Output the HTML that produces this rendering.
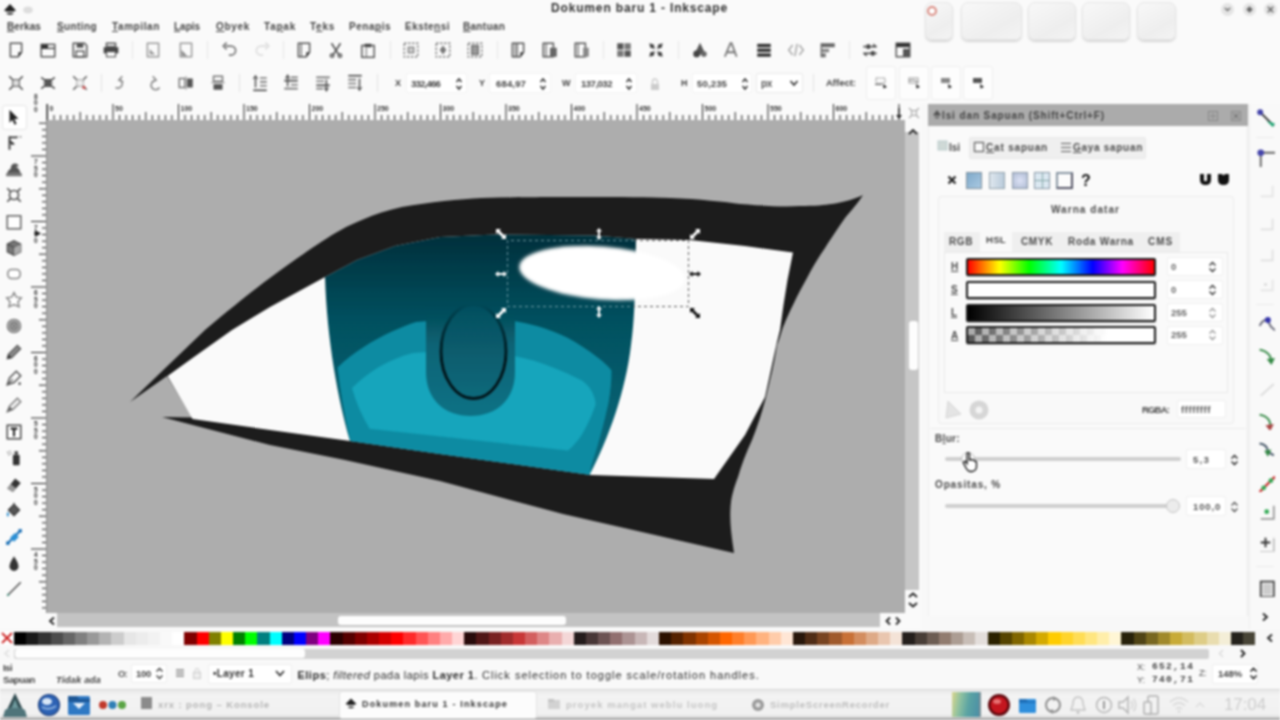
<!DOCTYPE html>
<html lang="id">
<head>
<meta charset="utf-8">
<title>Dokumen baru 1 - Inkscape</title>
<style>
*{box-sizing:border-box;margin:0;padding:0}
html,body{width:1280px;height:720px;overflow:hidden;background:#fafafa}
body{position:relative;font-family:"Liberation Sans",sans-serif;font-size:10px;color:#3a3a3a}
.abs{position:absolute}
#ui{position:absolute;left:0;top:0;width:1280px;height:720px;filter:blur(.8px)}
.t{position:absolute;white-space:nowrap;line-height:12px}
/* SECTION-CSS */
</style>
</head>
<body>
<div id="ui">
<!-- SECTION-TITLE -->
<div class="abs" style="left:0px;top:0px;width:1280px;height:104px;background:#fafafa"></div>
<svg class="abs" style="left:3px;top:3px;" width="14" height="14" viewBox="0 0 14 14"><path d="M7,1 L13,7.5 Q10,9 7,8.600 Q4,9 1,7.500 Z" fill="#222"/><path d="M3,10.500 Q7,9 11,10.500 Q7,13 3,10.500Z" fill="#222"/></svg>
<svg class="abs" style="left:22px;top:5px;" width="12" height="10" viewBox="0 0 12 10"><ellipse cx="6" cy="5" rx="5" ry="3.500" fill="#ddd"/></svg>
<div class="t" style="left:551px;top:1.3px;font-size:12px;line-height:14.4px;color:#2e2e2e;font-weight:bold;letter-spacing:0.84px;">Dokumen baru 1 - Inkscape</div>
<div class="abs" style="left:925px;top:2px;width:28px;height:38px;border-radius:7px;background:linear-gradient(150deg,#f8f8f8,#eeeeee 65%,#f4f4f4);border:1px solid #e6e6e6;box-shadow:0 2px 2px rgba(0,0,0,.14)"></div>
<div class="abs" style="left:961px;top:2px;width:61px;height:38px;border-radius:7px;background:linear-gradient(150deg,#f8f8f8,#eeeeee 65%,#f4f4f4);border:1px solid #e6e6e6;box-shadow:0 2px 2px rgba(0,0,0,.14)"></div>
<div class="abs" style="left:1028px;top:2px;width:48px;height:38px;border-radius:7px;background:linear-gradient(150deg,#f8f8f8,#eeeeee 65%,#f4f4f4);border:1px solid #e6e6e6;box-shadow:0 2px 2px rgba(0,0,0,.14)"></div>
<div class="abs" style="left:1082px;top:2px;width:48px;height:38px;border-radius:7px;background:linear-gradient(150deg,#f8f8f8,#eeeeee 65%,#f4f4f4);border:1px solid #e6e6e6;box-shadow:0 2px 2px rgba(0,0,0,.14)"></div>
<div class="abs" style="left:1137px;top:2px;width:39px;height:38px;border-radius:7px;background:linear-gradient(150deg,#f8f8f8,#eeeeee 65%,#f4f4f4);border:1px solid #e6e6e6;box-shadow:0 2px 2px rgba(0,0,0,.14)"></div>
<div class="abs" style="left:927px;top:6px;width:10px;height:10px;border-radius:50%;border:2px solid #d98a80;background:#fff"></div>
<svg class="abs" style="left:1220.5px;top:3px;" width="13" height="13" viewBox="0 0 12 12"><circle cx="6" cy="6" r="6" fill="#e4e4e4"/><path d="M3.500,4.500 L6,7 L8.500,4.500" stroke="#666" stroke-width="1.300" fill="none"/></svg>
<svg class="abs" style="left:1242.5px;top:3px;" width="13" height="13" viewBox="0 0 12 12"><circle cx="6" cy="6" r="6" fill="#e4e4e4"/><path d="M6,3 L9,6 L6,9 L3,6Z" fill="#666"/></svg>
<svg class="abs" style="left:1263.5px;top:3px;" width="13" height="13" viewBox="0 0 12 12"><circle cx="6" cy="6" r="6" fill="#e4e4e4"/><path d="M3.500,3.500 L8.500,8.500 M8.500,3.500 L3.500,8.500" stroke="#666" stroke-width="1.400"/></svg>
<!-- /SECTION-TITLE -->
<!-- SECTION-MENU -->
<div class="t" style="left:7px;top:20.5px;font-size:10px;font-weight:bold;line-height:12px;color:#444;letter-spacing:0.11px"><u>B</u>erkas</div>
<div class="t" style="left:57px;top:20.5px;font-size:10px;font-weight:bold;line-height:12px;color:#444;letter-spacing:0.40px"><u>S</u>unting</div>
<div class="t" style="left:112px;top:20.5px;font-size:10px;font-weight:bold;line-height:12px;color:#444;letter-spacing:0.60px"><u>T</u>ampilan</div>
<div class="t" style="left:174px;top:20.5px;font-size:10px;font-weight:bold;line-height:12px;color:#444;letter-spacing:-0.03px"><u>L</u>apis</div>
<div class="t" style="left:216px;top:20.5px;font-size:10px;font-weight:bold;line-height:12px;color:#444;letter-spacing:0.68px"><u>O</u>byek</div>
<div class="t" style="left:264px;top:20.5px;font-size:10px;font-weight:bold;line-height:12px;color:#444;letter-spacing:0.77px">Ta<u>p</u>ak</div>
<div class="t" style="left:310px;top:20.5px;font-size:10px;font-weight:bold;line-height:12px;color:#444;letter-spacing:0.73px">T<u>e</u>ks</div>
<div class="t" style="left:349px;top:20.5px;font-size:10px;font-weight:bold;line-height:12px;color:#444;letter-spacing:0.52px">Pena<u>p</u>is</div>
<div class="t" style="left:405px;top:20.5px;font-size:10px;font-weight:bold;line-height:12px;color:#444;letter-spacing:0.48px">Ekste<u>n</u>si</div>
<div class="t" style="left:463px;top:20.5px;font-size:10px;font-weight:bold;line-height:12px;color:#444;letter-spacing:0.29px"><u>B</u>antuan</div>
<!-- /SECTION-MENU -->
<!-- SECTION-TOOLBAR1 -->
<svg class="abs" style="left:7px;top:40.5px;opacity:1;" width="18" height="18" viewBox="0 0 16 16"><path d="M3,2 H13 V10 L10,14 H3Z" stroke="#555" fill="none" stroke-width="1.3"/><path d="M13,10 L10,14 V10Z" fill="#333"/></svg>
<svg class="abs" style="left:39px;top:40.5px;opacity:1;" width="18" height="18" viewBox="0 0 16 16"><rect x="2" y="3" width="12" height="11" stroke="#555" fill="none" stroke-width="1.3"/><path d="M2,3 H8 V6 H14 V7 H2Z" fill="#333"/></svg>
<svg class="abs" style="left:71px;top:40.5px;opacity:1;" width="18" height="18" viewBox="0 0 16 16"><path d="M2,2 H12 L14,4 V14 H2Z" stroke="#555" fill="none" stroke-width="1.3"/><rect x="5" y="2" width="6" height="4" fill="#555"/><rect x="4.500" y="9" width="7" height="5" stroke="#555" fill="none" stroke-width="1.3"/></svg>
<svg class="abs" style="left:102px;top:40.5px;opacity:1;" width="18" height="18" viewBox="0 0 16 16"><rect x="4" y="2" width="8" height="3" stroke="#555" fill="none" stroke-width="1.3"/><rect x="1.500" y="5.500" width="13" height="5.500" fill="#444"/><rect x="4" y="9.500" width="8" height="4.500" fill="#fff" stroke="#555"/></svg>
<svg class="abs" style="left:144px;top:40.5px;opacity:1;" width="18" height="18" viewBox="0 0 16 16"><rect x="3" y="2" width="10" height="12" stroke="#999" fill="none" stroke-width="1.300"/><path d="M5,12 L10,12 L5,7Z" fill="#999"/></svg>
<svg class="abs" style="left:177px;top:40.5px;opacity:1;" width="18" height="18" viewBox="0 0 16 16"><rect x="3" y="2" width="10" height="12" stroke="#999" fill="none" stroke-width="1.300"/><path d="M4,13 L9,13 L4,8Z" fill="#888"/></svg>
<svg class="abs" style="left:221px;top:40.5px;opacity:1;" width="18" height="18" viewBox="0 0 16 16"><path d="M4,4.500 H9 A4,4 0 0 1 9,12.500 H7" stroke="#777" fill="none" stroke-width="1.500"/><path d="M5,1.500 L2,4.500 L5,7.500" stroke="#777" fill="none" stroke-width="1.500"/></svg>
<svg class="abs" style="left:253px;top:40.5px;opacity:1;" width="18" height="18" viewBox="0 0 16 16"><path d="M12,4.500 H7 A4,4 0 0 0 7,12.500 H9" stroke="#ddd" fill="none" stroke-width="1.500"/><path d="M11,1.500 L14,4.500 L11,7.500" stroke="#ddd" fill="none" stroke-width="1.500"/></svg>
<svg class="abs" style="left:295px;top:40.5px;opacity:1;" width="18" height="18" viewBox="0 0 16 16"><path d="M3,2 H13 V10 L10,14 H3Z" stroke="#555" fill="none" stroke-width="1.3"/><path d="M5.500,2 V14" stroke="#555"/><path d="M13,10 L10,14 V10Z" fill="#333"/></svg>
<svg class="abs" style="left:327px;top:40.5px;opacity:1;" width="18" height="18" viewBox="0 0 16 16"><path d="M4,2 L11,13 M12,2 L5,13" stroke="#555" stroke-width="1.500"/><circle cx="4.500" cy="13" r="1.500" stroke="#555" fill="none" stroke-width="1.3"/><circle cx="11.500" cy="13" r="1.500" stroke="#555" fill="none" stroke-width="1.3"/></svg>
<svg class="abs" style="left:359px;top:40.5px;opacity:1;" width="18" height="18" viewBox="0 0 16 16"><rect x="2.500" y="4" width="11" height="10.500" stroke="#555" fill="none" stroke-width="1.3"/><path d="M5,2.500 H11 V5.500 H5Z" fill="#444"/><path d="M6.500,6 V14" stroke="#777"/></svg>
<svg class="abs" style="left:402px;top:40.5px;opacity:1;" width="18" height="18" viewBox="0 0 16 16"><rect x="2" y="2" width="12" height="12" stroke="#777" fill="none" stroke-dasharray="2 1.500" stroke-width="1.300"/><rect x="5.500" y="5.500" width="5" height="5" fill="#ccc" stroke="#777"/></svg>
<svg class="abs" style="left:434px;top:40.5px;opacity:1;" width="18" height="18" viewBox="0 0 16 16"><rect x="2" y="2" width="12" height="12" stroke="#777" fill="none" stroke-dasharray="2 1.500" stroke-width="1.300"/><path d="M8,4 L11,8 L8,12 L5,8Z" fill="#777"/></svg>
<svg class="abs" style="left:466px;top:40.5px;opacity:1;" width="18" height="18" viewBox="0 0 16 16"><rect x="2" y="2" width="12" height="12" stroke="#777" fill="none" stroke-dasharray="2 1.500" stroke-width="1.300"/><rect x="5" y="4" width="6" height="8" fill="#999" stroke="#666"/></svg>
<svg class="abs" style="left:509px;top:40.5px;opacity:1;" width="18" height="18" viewBox="0 0 16 16"><path d="M3,2 H13 V10 L10,14 H3Z" stroke="#555" fill="none" stroke-width="1.3"/><path d="M5.500,2 V14 M7.500,2V14" stroke="#555"/><path d="M13,10 L10,14 V10Z" fill="#333"/></svg>
<svg class="abs" style="left:541px;top:40.5px;opacity:1;" width="18" height="18" viewBox="0 0 16 16"><rect x="2" y="2" width="9" height="12" stroke="#555" fill="none" stroke-width="1.3"/><path d="M4.500,2V14" stroke="#555"/><rect x="8" y="6" width="6" height="8" fill="#666"/></svg>
<svg class="abs" style="left:573px;top:40.5px;opacity:1;" width="18" height="18" viewBox="0 0 16 16"><rect x="2" y="2" width="9" height="12" stroke="#555" fill="none" stroke-width="1.3"/><path d="M4.500,2V14" stroke="#555"/><rect x="9" y="6" width="5" height="8" fill="#888"/></svg>
<svg class="abs" style="left:615px;top:40.5px;opacity:1;" width="18" height="18" viewBox="0 0 16 16"><rect x="2" y="2" width="5.500" height="5.500" fill="#555"/><rect x="8.500" y="2" width="5.500" height="5.500" fill="#777"/><rect x="2" y="8.500" width="5.500" height="5.500" fill="#777"/><rect x="8.500" y="8.500" width="5.500" height="5.500" fill="#555"/></svg>
<svg class="abs" style="left:647px;top:40.5px;opacity:1;" width="18" height="18" viewBox="0 0 16 16"><path d="M2,2 L6,3 L7,7 L3,6Z M14,2 L10,3 L9,7 L13,6Z M2,14 L6,13 L7,9 L3,10Z M14,14 L10,13 L9,9 L13,10Z" fill="#444"/></svg>
<svg class="abs" style="left:691px;top:40.5px;opacity:1;" width="18" height="18" viewBox="0 0 16 16"><path d="M8,1.500 L13,12 H3Z" fill="#555"/><circle cx="5" cy="11.500" r="3" fill="#444"/><circle cx="11.500" cy="11.500" r="2.500" fill="#666"/></svg>
<svg class="abs" style="left:722px;top:40.5px;opacity:1;" width="18" height="18" viewBox="0 0 16 16"><path d="M2.500,14 L7.500,2 H8.500 L13,14 M4.500,10 H11" stroke="#777" stroke-width="1.600" fill="none"/></svg>
<svg class="abs" style="left:755px;top:40.5px;opacity:1;" width="18" height="18" viewBox="0 0 16 16"><rect x="2" y="2.500" width="12" height="3" fill="#333"/><rect x="2" y="6.700" width="12" height="3" fill="#333"/><rect x="2" y="11" width="12" height="3" fill="#333"/></svg>
<svg class="abs" style="left:787px;top:40.5px;opacity:1;" width="18" height="18" viewBox="0 0 16 16"><path d="M5,3.500 L1.500,8 L5,12.500 M11,3.500 L14.500,8 L11,12.500 M9,2.500 L7,13.500" stroke="#aaa" stroke-width="1.400" fill="none"/></svg>
<svg class="abs" style="left:819px;top:40.5px;opacity:1;" width="18" height="18" viewBox="0 0 16 16"><rect x="2" y="2" width="12" height="3.500" fill="#666"/><rect x="2" y="7" width="7" height="3" fill="#888"/><rect x="2" y="11" width="4" height="3.500" fill="#777"/><path d="M2,2V14.500" stroke="#555"/></svg>
<svg class="abs" style="left:861px;top:40.5px;opacity:1;" width="18" height="18" viewBox="0 0 16 16"><path d="M2,5 H14 M2,11 H14" stroke="#555" stroke-width="1.400"/><path d="M11,2 L14,5 L11,5Z M5,14 L2,11 L5,11Z" fill="#444"/><rect x="5" y="3" width="3" height="4" fill="#444"/><rect x="9" y="9" width="3" height="4" fill="#444"/></svg>
<svg class="abs" style="left:894px;top:40.5px;opacity:1;" width="18" height="18" viewBox="0 0 16 16"><rect x="2" y="2" width="12" height="12" stroke="#555" fill="none" stroke-width="1.3"/><rect x="2" y="2" width="12" height="3.500" fill="#333"/><rect x="8" y="7" width="6" height="7" fill="#555"/></svg>
<div class="abs" style="left:132px;top:41px;width:1px;height:18px;background:#e6e6e6"></div>
<div class="abs" style="left:207px;top:41px;width:1px;height:18px;background:#e6e6e6"></div>
<div class="abs" style="left:283px;top:41px;width:1px;height:18px;background:#e6e6e6"></div>
<div class="abs" style="left:390px;top:41px;width:1px;height:18px;background:#e6e6e6"></div>
<div class="abs" style="left:497px;top:41px;width:1px;height:18px;background:#e6e6e6"></div>
<div class="abs" style="left:603px;top:41px;width:1px;height:18px;background:#e6e6e6"></div>
<div class="abs" style="left:678px;top:41px;width:1px;height:18px;background:#e6e6e6"></div>
<div class="abs" style="left:849px;top:41px;width:1px;height:18px;background:#e6e6e6"></div>
<!-- /SECTION-TOOLBAR1 -->
<!-- SECTION-TOOLBAR2 -->
<svg class="abs" style="left:7px;top:73.5px;opacity:1;" width="18" height="18" viewBox="0 0 16 16"><path d="M2,2 L14,14 M14,2 L2,14" stroke="#555" stroke-width="1.500"/><rect x="5" y="5" width="6" height="6" fill="#ddd" stroke="#666"/></svg>
<svg class="abs" style="left:39px;top:73.5px;opacity:1;" width="18" height="18" viewBox="0 0 16 16"><path d="M2,3 L14,13 M14,3 L2,13" stroke="#555" stroke-width="1.500"/><path d="M4,8 H12 M5,5.500 H11 M5,10.500H11" stroke="#333" stroke-width="1.500"/></svg>
<svg class="abs" style="left:71px;top:73.5px;opacity:1;" width="18" height="18" viewBox="0 0 16 16"><path d="M2,2 L14,14 M14,2 L2,14" stroke="#666" stroke-width="1.500"/><rect x="5" y="5" width="6" height="6" fill="#eee" stroke="#888" stroke-dasharray="1.500 1"/><circle cx="11.500" cy="12" r="1.500" fill="#c55"/></svg>
<svg class="abs" style="left:111px;top:73.5px;opacity:1;" width="18" height="18" viewBox="0 0 16 16"><path d="M4,12 A4,4 0 1 0 8,5" stroke="#888" stroke-width="1.400" fill="none"/><path d="M10,2 L7,5.500 L11,7" stroke="#888" fill="none" stroke-width="1.400"/></svg>
<svg class="abs" style="left:146px;top:73.5px;opacity:1;" width="18" height="18" viewBox="0 0 16 16"><path d="M12,12 A4,4 0 1 1 8,6" stroke="#888" stroke-width="1.400" fill="none"/><path d="M6,2 L9,5.500 L5,7" stroke="#888" fill="none" stroke-width="1.400"/></svg>
<svg class="abs" style="left:177px;top:73.5px;opacity:1;" width="18" height="18" viewBox="0 0 16 16"><path d="M2,4 H7 V12 H2Z" stroke="#777" fill="none" stroke-width="1.300"/><path d="M9,4 H14 V12 H9Z" fill="#555"/><path d="M8,2V14" stroke="#999"/></svg>
<svg class="abs" style="left:209px;top:73.5px;opacity:1;" width="18" height="18" viewBox="0 0 16 16"><path d="M4,2 H12 V6.500 H4Z" stroke="#777" fill="none" stroke-width="1.300"/><path d="M4,9 H12 V14 H4Z" fill="#555"/><path d="M2,7.700H14" stroke="#999"/></svg>
<svg class="abs" style="left:251px;top:73.5px;opacity:1;" width="18" height="18" viewBox="0 0 16 16"><path d="M2,14.500 H14" stroke="#444" stroke-width="1.400"/><path d="M4,2 V12" stroke="#555" stroke-width="1.400"/><path d="M2,4.500 L4,1.500 L6,4.500" stroke="#555" fill="none"/><path d="M8,3.500H14 M8,7H14 M8,10.500H14" stroke="#777" stroke-width="1.400"/></svg>
<svg class="abs" style="left:282px;top:73.5px;opacity:1;" width="18" height="18" viewBox="0 0 16 16"><path d="M2,6 H14" stroke="#444" stroke-width="1.400"/><path d="M5,1.500 V11" stroke="#555" stroke-width="1.400"/><path d="M3,4 L5,1 L7,4" stroke="#555" fill="none"/><path d="M8,3H14 M8,9.500H14 M2,13H14" stroke="#777" stroke-width="1.400"/></svg>
<svg class="abs" style="left:314px;top:73.5px;opacity:1;" width="18" height="18" viewBox="0 0 16 16"><path d="M2,10 H14" stroke="#444" stroke-width="1.400"/><path d="M11,5 V14.500" stroke="#555" stroke-width="1.400"/><path d="M9,12 L11,15 L13,12" stroke="#555" fill="none"/><path d="M2,3H14 M2,6.500H9 M2,13H8" stroke="#777" stroke-width="1.400"/></svg>
<svg class="abs" style="left:346px;top:73.5px;opacity:1;" width="18" height="18" viewBox="0 0 16 16"><path d="M2,1.500 H14" stroke="#444" stroke-width="1.400"/><path d="M12,4 V14" stroke="#555" stroke-width="1.400"/><path d="M10,11.500 L12,14.500 L14,11.500" stroke="#555" fill="none"/><path d="M2,5H9 M2,8.500H9 M2,12H9" stroke="#777" stroke-width="1.400"/></svg>
<div class="abs" style="left:101px;top:74px;width:1px;height:18px;background:#e2e2e2"></div>
<div class="abs" style="left:239px;top:74px;width:1px;height:18px;background:#e2e2e2"></div>
<div class="abs" style="left:377px;top:74px;width:1px;height:18px;background:#e2e2e2"></div>
<div class="t" style="left:395px;top:78.1px;font-size:9px;line-height:10.8px;color:#444;font-weight:bold;">X</div>
<div class="abs" style="left:406px;top:73px;width:61px;height:20px;background:#fff;border:1px solid #f3f3f3;border-radius:2px"></div>
<div class="t" style="left:411px;top:77.8px;font-size:9.5px;line-height:11.4px;color:#444;font-weight:bold;letter-spacing:-0.76px;">332,466</div>
<svg class="abs" style="left:455px;top:76.5px;" width="8" height="14" viewBox="0 0 8 14"><path d="M1.500,5 L4,2 L6.500,5 M1.500,9 L4,12 L6.500,9" stroke="#333" stroke-width="1.500" fill="none"/></svg>
<div class="t" style="left:479px;top:78.1px;font-size:9px;line-height:10.8px;color:#444;font-weight:bold;">Y</div>
<div class="abs" style="left:489px;top:73px;width:62px;height:20px;background:#fff;border:1px solid #f3f3f3;border-radius:2px"></div>
<div class="t" style="left:496px;top:77.8px;font-size:9.5px;line-height:11.4px;color:#444;font-weight:bold;letter-spacing:0.16px;">684,97</div>
<svg class="abs" style="left:539px;top:76.5px;" width="8" height="14" viewBox="0 0 8 14"><path d="M1.500,5 L4,2 L6.500,5 M1.500,9 L4,12 L6.500,9" stroke="#333" stroke-width="1.500" fill="none"/></svg>
<div class="t" style="left:562px;top:78.1px;font-size:9px;line-height:10.8px;color:#444;font-weight:bold;">W</div>
<div class="abs" style="left:575px;top:73px;width:62px;height:20px;background:#fff;border:1px solid #f3f3f3;border-radius:2px"></div>
<div class="t" style="left:581px;top:77.8px;font-size:9.5px;line-height:11.4px;color:#444;font-weight:bold;letter-spacing:-0.48px;">137,032</div>
<svg class="abs" style="left:625px;top:76.5px;" width="8" height="14" viewBox="0 0 8 14"><path d="M1.500,5 L4,2 L6.500,5 M1.500,9 L4,12 L6.500,9" stroke="#333" stroke-width="1.500" fill="none"/></svg>
<svg class="abs" style="left:647px;top:76px;opacity:1;" width="16" height="16" viewBox="0 0 16 16"><rect x="4" y="8" width="8" height="6" fill="#ccc"/><path d="M5.500,8 V5.500 A2.500,2.500 0 0 1 10.500,5.500 V8" stroke="#ccc" fill="none" stroke-width="1.300"/></svg>
<div class="t" style="left:681px;top:78.1px;font-size:9px;line-height:10.8px;color:#444;font-weight:bold;">H</div>
<div class="abs" style="left:692px;top:73px;width:60px;height:20px;background:#fff;border:1px solid #f3f3f3;border-radius:2px"></div>
<div class="t" style="left:697px;top:77.8px;font-size:9.5px;line-height:11.4px;color:#444;font-weight:bold;letter-spacing:0.16px;">50,235</div>
<svg class="abs" style="left:741px;top:76.5px;" width="8" height="14" viewBox="0 0 8 14"><path d="M1.500,5 L4,2 L6.500,5 M1.500,9 L4,12 L6.500,9" stroke="#333" stroke-width="1.500" fill="none"/></svg>
<div class="abs" style="left:756px;top:73px;width:47px;height:20px;background:#fff;border:1px solid #e8e8e8;border-radius:2px"></div>
<div class="t" style="left:761px;top:77.5px;font-size:10px;line-height:12px;color:#555;font-weight:bold;letter-spacing:-0.34px;">px</div>
<svg class="abs" style="left:789px;top:79px;" width="10" height="8" viewBox="0 0 10 8"><path d="M1.500,2 L5,6 L8.500,2" stroke="#333" stroke-width="1.700" fill="none"/></svg>
<div class="abs" style="left:813px;top:74px;width:1px;height:18px;background:#e2e2e2"></div>
<div class="t" style="left:826px;top:77.3px;font-size:9.5px;line-height:11.4px;color:#444;font-weight:bold;letter-spacing:-0.01px;">Affect:</div>
<div class="abs" style="left:866px;top:66px;width:30px;height:34px;background:#fdfdfd;border:1px solid #efefef;border-radius:3px"></div>
<svg class="abs" style="left:873px;top:75px;opacity:1;" width="16" height="16" viewBox="0 0 16 16"><rect x="3" y="3" width="9" height="5" fill="none" stroke="#777" stroke-dasharray="1.500 1"/><path d="M2,9.500H9" stroke="#555"/><path d="M10,9 L14,12 L10.500,13.500Z" fill="#222"/></svg>
<div class="abs" style="left:899px;top:66px;width:30px;height:34px;background:#fdfdfd;border:1px solid #efefef;border-radius:3px"></div>
<svg class="abs" style="left:906px;top:75px;opacity:1;" width="16" height="16" viewBox="0 0 16 16"><rect x="3" y="3" width="9" height="5" fill="none" stroke="#999"/><path d="M3,5.500 Q8,4 12,7" stroke="#777" fill="none"/><path d="M10,9 L14,12 L10.500,13.500Z" fill="#222"/></svg>
<div class="abs" style="left:931px;top:66px;width:30px;height:34px;background:#fdfdfd;border:1px solid #efefef;border-radius:3px"></div>
<svg class="abs" style="left:938px;top:75px;opacity:1;" width="16" height="16" viewBox="0 0 16 16"><rect x="3" y="3" width="9" height="5" fill="#888"/><path d="M10,9 L14,12 L10.500,13.500Z" fill="#222"/></svg>
<div class="abs" style="left:963px;top:66px;width:30px;height:34px;background:#fdfdfd;border:1px solid #efefef;border-radius:3px"></div>
<svg class="abs" style="left:970px;top:75px;opacity:1;" width="16" height="16" viewBox="0 0 16 16"><rect x="3" y="3" width="9" height="5" fill="#555"/><path d="M10,9 L14,12 L10.500,13.500Z" fill="#222"/></svg>
<!-- /SECTION-TOOLBAR2 -->
<!-- SECTION-RULERS -->
<div class="abs" style="left:0px;top:104px;width:930px;height:556px;background:#fafafa"></div>
<svg class="abs" style="left:0px;top:104px;" width="930" height="16" viewBox="0 0 930 16"><path d="M47.5,0 V16" stroke="#222" stroke-width="1"/><path d="M54.0,11 V16" stroke="#222" stroke-width="1"/><path d="M60.6,11 V16" stroke="#222" stroke-width="1"/><path d="M67.2,11 V16" stroke="#222" stroke-width="1"/><path d="M73.7,11 V16" stroke="#222" stroke-width="1"/><path d="M80.2,8 V16" stroke="#222" stroke-width="1"/><path d="M86.8,11 V16" stroke="#222" stroke-width="1"/><path d="M93.3,11 V16" stroke="#222" stroke-width="1"/><path d="M99.9,11 V16" stroke="#222" stroke-width="1"/><path d="M106.4,11 V16" stroke="#222" stroke-width="1"/><path d="M113.0,0 V16" stroke="#222" stroke-width="1"/><path d="M119.5,11 V16" stroke="#222" stroke-width="1"/><path d="M126.1,11 V16" stroke="#222" stroke-width="1"/><path d="M132.6,11 V16" stroke="#222" stroke-width="1"/><path d="M139.2,11 V16" stroke="#222" stroke-width="1"/><path d="M145.8,8 V16" stroke="#222" stroke-width="1"/><path d="M152.3,11 V16" stroke="#222" stroke-width="1"/><path d="M158.8,11 V16" stroke="#222" stroke-width="1"/><path d="M165.4,11 V16" stroke="#222" stroke-width="1"/><path d="M171.9,11 V16" stroke="#222" stroke-width="1"/><path d="M178.5,0 V16" stroke="#222" stroke-width="1"/><path d="M185.0,11 V16" stroke="#222" stroke-width="1"/><path d="M191.6,11 V16" stroke="#222" stroke-width="1"/><path d="M198.2,11 V16" stroke="#222" stroke-width="1"/><path d="M204.7,11 V16" stroke="#222" stroke-width="1"/><path d="M211.2,8 V16" stroke="#222" stroke-width="1"/><path d="M217.8,11 V16" stroke="#222" stroke-width="1"/><path d="M224.3,11 V16" stroke="#222" stroke-width="1"/><path d="M230.9,11 V16" stroke="#222" stroke-width="1"/><path d="M237.4,11 V16" stroke="#222" stroke-width="1"/><path d="M244.0,0 V16" stroke="#222" stroke-width="1"/><path d="M250.5,11 V16" stroke="#222" stroke-width="1"/><path d="M257.1,11 V16" stroke="#222" stroke-width="1"/><path d="M263.6,11 V16" stroke="#222" stroke-width="1"/><path d="M270.2,11 V16" stroke="#222" stroke-width="1"/><path d="M276.8,8 V16" stroke="#222" stroke-width="1"/><path d="M283.3,11 V16" stroke="#222" stroke-width="1"/><path d="M289.9,11 V16" stroke="#222" stroke-width="1"/><path d="M296.4,11 V16" stroke="#222" stroke-width="1"/><path d="M302.9,11 V16" stroke="#222" stroke-width="1"/><path d="M309.5,0 V16" stroke="#222" stroke-width="1"/><path d="M316.1,11 V16" stroke="#222" stroke-width="1"/><path d="M322.6,11 V16" stroke="#222" stroke-width="1"/><path d="M329.1,11 V16" stroke="#222" stroke-width="1"/><path d="M335.7,11 V16" stroke="#222" stroke-width="1"/><path d="M342.2,8 V16" stroke="#222" stroke-width="1"/><path d="M348.8,11 V16" stroke="#222" stroke-width="1"/><path d="M355.3,11 V16" stroke="#222" stroke-width="1"/><path d="M361.9,11 V16" stroke="#222" stroke-width="1"/><path d="M368.4,11 V16" stroke="#222" stroke-width="1"/><path d="M375.0,0 V16" stroke="#222" stroke-width="1"/><path d="M381.6,11 V16" stroke="#222" stroke-width="1"/><path d="M388.1,11 V16" stroke="#222" stroke-width="1"/><path d="M394.6,11 V16" stroke="#222" stroke-width="1"/><path d="M401.2,11 V16" stroke="#222" stroke-width="1"/><path d="M407.8,8 V16" stroke="#222" stroke-width="1"/><path d="M414.3,11 V16" stroke="#222" stroke-width="1"/><path d="M420.8,11 V16" stroke="#222" stroke-width="1"/><path d="M427.4,11 V16" stroke="#222" stroke-width="1"/><path d="M433.9,11 V16" stroke="#222" stroke-width="1"/><path d="M440.5,0 V16" stroke="#222" stroke-width="1"/><path d="M447.1,11 V16" stroke="#222" stroke-width="1"/><path d="M453.6,11 V16" stroke="#222" stroke-width="1"/><path d="M460.1,11 V16" stroke="#222" stroke-width="1"/><path d="M466.7,11 V16" stroke="#222" stroke-width="1"/><path d="M473.2,8 V16" stroke="#222" stroke-width="1"/><path d="M479.8,11 V16" stroke="#222" stroke-width="1"/><path d="M486.3,11 V16" stroke="#222" stroke-width="1"/><path d="M492.9,11 V16" stroke="#222" stroke-width="1"/><path d="M499.4,11 V16" stroke="#222" stroke-width="1"/><path d="M506.0,0 V16" stroke="#222" stroke-width="1"/><path d="M512.5,11 V16" stroke="#222" stroke-width="1"/><path d="M519.1,11 V16" stroke="#222" stroke-width="1"/><path d="M525.6,11 V16" stroke="#222" stroke-width="1"/><path d="M532.2,11 V16" stroke="#222" stroke-width="1"/><path d="M538.8,8 V16" stroke="#222" stroke-width="1"/><path d="M545.3,11 V16" stroke="#222" stroke-width="1"/><path d="M551.8,11 V16" stroke="#222" stroke-width="1"/><path d="M558.4,11 V16" stroke="#222" stroke-width="1"/><path d="M564.9,11 V16" stroke="#222" stroke-width="1"/><path d="M571.5,0 V16" stroke="#222" stroke-width="1"/><path d="M578.0,11 V16" stroke="#222" stroke-width="1"/><path d="M584.6,11 V16" stroke="#222" stroke-width="1"/><path d="M591.1,11 V16" stroke="#222" stroke-width="1"/><path d="M597.7,11 V16" stroke="#222" stroke-width="1"/><path d="M604.2,8 V16" stroke="#222" stroke-width="1"/><path d="M610.8,11 V16" stroke="#222" stroke-width="1"/><path d="M617.4,11 V16" stroke="#222" stroke-width="1"/><path d="M623.9,11 V16" stroke="#222" stroke-width="1"/><path d="M630.4,11 V16" stroke="#222" stroke-width="1"/><path d="M637.0,0 V16" stroke="#222" stroke-width="1"/><path d="M643.5,11 V16" stroke="#222" stroke-width="1"/><path d="M650.1,11 V16" stroke="#222" stroke-width="1"/><path d="M656.6,11 V16" stroke="#222" stroke-width="1"/><path d="M663.2,11 V16" stroke="#222" stroke-width="1"/><path d="M669.8,8 V16" stroke="#222" stroke-width="1"/><path d="M676.3,11 V16" stroke="#222" stroke-width="1"/><path d="M682.9,11 V16" stroke="#222" stroke-width="1"/><path d="M689.4,11 V16" stroke="#222" stroke-width="1"/><path d="M695.9,11 V16" stroke="#222" stroke-width="1"/><path d="M702.5,0 V16" stroke="#222" stroke-width="1"/><path d="M709.0,11 V16" stroke="#222" stroke-width="1"/><path d="M715.6,11 V16" stroke="#222" stroke-width="1"/><path d="M722.1,11 V16" stroke="#222" stroke-width="1"/><path d="M728.7,11 V16" stroke="#222" stroke-width="1"/><path d="M735.2,8 V16" stroke="#222" stroke-width="1"/><path d="M741.8,11 V16" stroke="#222" stroke-width="1"/><path d="M748.4,11 V16" stroke="#222" stroke-width="1"/><path d="M754.9,11 V16" stroke="#222" stroke-width="1"/><path d="M761.4,11 V16" stroke="#222" stroke-width="1"/><path d="M768.0,0 V16" stroke="#222" stroke-width="1"/><path d="M774.5,11 V16" stroke="#222" stroke-width="1"/><path d="M781.1,11 V16" stroke="#222" stroke-width="1"/><path d="M787.6,11 V16" stroke="#222" stroke-width="1"/><path d="M794.2,11 V16" stroke="#222" stroke-width="1"/><path d="M800.8,8 V16" stroke="#222" stroke-width="1"/><path d="M807.3,11 V16" stroke="#222" stroke-width="1"/><path d="M813.9,11 V16" stroke="#222" stroke-width="1"/><path d="M820.4,11 V16" stroke="#222" stroke-width="1"/><path d="M826.9,11 V16" stroke="#222" stroke-width="1"/><path d="M833.5,0 V16" stroke="#222" stroke-width="1"/><path d="M840.0,11 V16" stroke="#222" stroke-width="1"/><path d="M846.6,11 V16" stroke="#222" stroke-width="1"/><path d="M853.1,11 V16" stroke="#222" stroke-width="1"/><path d="M859.7,11 V16" stroke="#222" stroke-width="1"/><path d="M866.2,8 V16" stroke="#222" stroke-width="1"/><path d="M872.8,11 V16" stroke="#222" stroke-width="1"/><path d="M879.4,11 V16" stroke="#222" stroke-width="1"/><path d="M885.9,11 V16" stroke="#222" stroke-width="1"/><path d="M892.4,11 V16" stroke="#222" stroke-width="1"/><path d="M899.0,0 V16" stroke="#222" stroke-width="1"/></svg>
<div class="t" style="left:49.5px;top:104.8px;font-size:7px;line-height:8.4px;color:#333;font-weight:bold;">0</div>
<div class="t" style="left:115px;top:104.8px;font-size:7px;line-height:8.4px;color:#333;font-weight:bold;">50</div>
<div class="t" style="left:180.5px;top:104.8px;font-size:7px;line-height:8.4px;color:#333;font-weight:bold;">100</div>
<div class="t" style="left:246px;top:104.8px;font-size:7px;line-height:8.4px;color:#333;font-weight:bold;">150</div>
<div class="t" style="left:311.5px;top:104.8px;font-size:7px;line-height:8.4px;color:#333;font-weight:bold;">200</div>
<div class="t" style="left:377px;top:104.8px;font-size:7px;line-height:8.4px;color:#333;font-weight:bold;">250</div>
<div class="t" style="left:442.5px;top:104.8px;font-size:7px;line-height:8.4px;color:#333;font-weight:bold;">300</div>
<div class="t" style="left:508px;top:104.8px;font-size:7px;line-height:8.4px;color:#333;font-weight:bold;">350</div>
<div class="t" style="left:573.5px;top:104.8px;font-size:7px;line-height:8.4px;color:#333;font-weight:bold;">400</div>
<div class="t" style="left:639px;top:104.8px;font-size:7px;line-height:8.4px;color:#333;font-weight:bold;">450</div>
<div class="t" style="left:704.5px;top:104.8px;font-size:7px;line-height:8.4px;color:#333;font-weight:bold;">500</div>
<div class="t" style="left:770px;top:104.8px;font-size:7px;line-height:8.4px;color:#333;font-weight:bold;">550</div>
<div class="t" style="left:835.5px;top:104.8px;font-size:7px;line-height:8.4px;color:#333;font-weight:bold;">600</div>
<svg class="abs" style="left:31px;top:120px;" width="16" height="493" viewBox="0 0 16 493"><path d="M8,3.2 H16" stroke="#222" stroke-width="1"/><path d="M11,9.8 H16" stroke="#222" stroke-width="1"/><path d="M11,16.3 H16" stroke="#222" stroke-width="1"/><path d="M11,22.9 H16" stroke="#222" stroke-width="1"/><path d="M11,29.4 H16" stroke="#222" stroke-width="1"/><path d="M0,36.0 H16" stroke="#222" stroke-width="1"/><path d="M11,42.6 H16" stroke="#222" stroke-width="1"/><path d="M11,49.1 H16" stroke="#222" stroke-width="1"/><path d="M11,55.6 H16" stroke="#222" stroke-width="1"/><path d="M11,62.2 H16" stroke="#222" stroke-width="1"/><path d="M8,68.8 H16" stroke="#222" stroke-width="1"/><path d="M11,75.3 H16" stroke="#222" stroke-width="1"/><path d="M11,81.8 H16" stroke="#222" stroke-width="1"/><path d="M11,88.4 H16" stroke="#222" stroke-width="1"/><path d="M11,94.9 H16" stroke="#222" stroke-width="1"/><path d="M0,101.5 H16" stroke="#222" stroke-width="1"/><path d="M11,108.0 H16" stroke="#222" stroke-width="1"/><path d="M11,114.6 H16" stroke="#222" stroke-width="1"/><path d="M11,121.2 H16" stroke="#222" stroke-width="1"/><path d="M11,127.7 H16" stroke="#222" stroke-width="1"/><path d="M8,134.2 H16" stroke="#222" stroke-width="1"/><path d="M11,140.8 H16" stroke="#222" stroke-width="1"/><path d="M11,147.4 H16" stroke="#222" stroke-width="1"/><path d="M11,153.9 H16" stroke="#222" stroke-width="1"/><path d="M11,160.4 H16" stroke="#222" stroke-width="1"/><path d="M0,167.0 H16" stroke="#222" stroke-width="1"/><path d="M11,173.5 H16" stroke="#222" stroke-width="1"/><path d="M11,180.1 H16" stroke="#222" stroke-width="1"/><path d="M11,186.6 H16" stroke="#222" stroke-width="1"/><path d="M11,193.2 H16" stroke="#222" stroke-width="1"/><path d="M8,199.8 H16" stroke="#222" stroke-width="1"/><path d="M11,206.3 H16" stroke="#222" stroke-width="1"/><path d="M11,212.9 H16" stroke="#222" stroke-width="1"/><path d="M11,219.4 H16" stroke="#222" stroke-width="1"/><path d="M11,225.9 H16" stroke="#222" stroke-width="1"/><path d="M0,232.5 H16" stroke="#222" stroke-width="1"/><path d="M11,239.1 H16" stroke="#222" stroke-width="1"/><path d="M11,245.6 H16" stroke="#222" stroke-width="1"/><path d="M11,252.1 H16" stroke="#222" stroke-width="1"/><path d="M11,258.7 H16" stroke="#222" stroke-width="1"/><path d="M8,265.2 H16" stroke="#222" stroke-width="1"/><path d="M11,271.8 H16" stroke="#222" stroke-width="1"/><path d="M11,278.3 H16" stroke="#222" stroke-width="1"/><path d="M11,284.9 H16" stroke="#222" stroke-width="1"/><path d="M11,291.4 H16" stroke="#222" stroke-width="1"/><path d="M0,298.0 H16" stroke="#222" stroke-width="1"/><path d="M11,304.6 H16" stroke="#222" stroke-width="1"/><path d="M11,311.1 H16" stroke="#222" stroke-width="1"/><path d="M11,317.6 H16" stroke="#222" stroke-width="1"/><path d="M11,324.2 H16" stroke="#222" stroke-width="1"/><path d="M8,330.8 H16" stroke="#222" stroke-width="1"/><path d="M11,337.3 H16" stroke="#222" stroke-width="1"/><path d="M11,343.8 H16" stroke="#222" stroke-width="1"/><path d="M11,350.4 H16" stroke="#222" stroke-width="1"/><path d="M11,356.9 H16" stroke="#222" stroke-width="1"/><path d="M0,363.5 H16" stroke="#222" stroke-width="1"/><path d="M11,370.1 H16" stroke="#222" stroke-width="1"/><path d="M11,376.6 H16" stroke="#222" stroke-width="1"/><path d="M11,383.1 H16" stroke="#222" stroke-width="1"/><path d="M11,389.7 H16" stroke="#222" stroke-width="1"/><path d="M8,396.2 H16" stroke="#222" stroke-width="1"/><path d="M11,402.8 H16" stroke="#222" stroke-width="1"/><path d="M11,409.3 H16" stroke="#222" stroke-width="1"/><path d="M11,415.9 H16" stroke="#222" stroke-width="1"/><path d="M11,422.5 H16" stroke="#222" stroke-width="1"/><path d="M0,429.0 H16" stroke="#222" stroke-width="1"/><path d="M11,435.5 H16" stroke="#222" stroke-width="1"/><path d="M11,442.1 H16" stroke="#222" stroke-width="1"/><path d="M11,448.6 H16" stroke="#222" stroke-width="1"/><path d="M11,455.2 H16" stroke="#222" stroke-width="1"/><path d="M8,461.8 H16" stroke="#222" stroke-width="1"/><path d="M11,468.3 H16" stroke="#222" stroke-width="1"/><path d="M11,474.8 H16" stroke="#222" stroke-width="1"/><path d="M11,481.4 H16" stroke="#222" stroke-width="1"/><path d="M11,487.9 H16" stroke="#222" stroke-width="1"/></svg>
<div class="t" style="left:34px;top:92.6px;font-size:6.5px;line-height:7.8px;color:#333;font-weight:bold;">8</div>
<div class="t" style="left:34px;top:99.1px;font-size:6.5px;line-height:7.8px;color:#333;font-weight:bold;">0</div>
<div class="t" style="left:34px;top:105.6px;font-size:6.5px;line-height:7.8px;color:#333;font-weight:bold;">0</div>
<div class="t" style="left:34px;top:158.1px;font-size:6.5px;line-height:7.8px;color:#333;font-weight:bold;">7</div>
<div class="t" style="left:34px;top:164.6px;font-size:6.5px;line-height:7.8px;color:#333;font-weight:bold;">5</div>
<div class="t" style="left:34px;top:171.1px;font-size:6.5px;line-height:7.8px;color:#333;font-weight:bold;">0</div>
<div class="t" style="left:34px;top:223.6px;font-size:6.5px;line-height:7.8px;color:#333;font-weight:bold;">7</div>
<div class="t" style="left:34px;top:230.1px;font-size:6.5px;line-height:7.8px;color:#333;font-weight:bold;">0</div>
<div class="t" style="left:34px;top:236.6px;font-size:6.5px;line-height:7.8px;color:#333;font-weight:bold;">0</div>
<div class="t" style="left:34px;top:289.1px;font-size:6.5px;line-height:7.8px;color:#333;font-weight:bold;">6</div>
<div class="t" style="left:34px;top:295.6px;font-size:6.5px;line-height:7.8px;color:#333;font-weight:bold;">5</div>
<div class="t" style="left:34px;top:302.1px;font-size:6.5px;line-height:7.8px;color:#333;font-weight:bold;">0</div>
<div class="t" style="left:34px;top:354.6px;font-size:6.5px;line-height:7.8px;color:#333;font-weight:bold;">6</div>
<div class="t" style="left:34px;top:361.1px;font-size:6.5px;line-height:7.8px;color:#333;font-weight:bold;">0</div>
<div class="t" style="left:34px;top:367.6px;font-size:6.5px;line-height:7.8px;color:#333;font-weight:bold;">0</div>
<div class="t" style="left:34px;top:420.1px;font-size:6.5px;line-height:7.8px;color:#333;font-weight:bold;">5</div>
<div class="t" style="left:34px;top:426.6px;font-size:6.5px;line-height:7.8px;color:#333;font-weight:bold;">5</div>
<div class="t" style="left:34px;top:433.1px;font-size:6.5px;line-height:7.8px;color:#333;font-weight:bold;">0</div>
<div class="t" style="left:34px;top:485.6px;font-size:6.5px;line-height:7.8px;color:#333;font-weight:bold;">5</div>
<div class="t" style="left:34px;top:492.1px;font-size:6.5px;line-height:7.8px;color:#333;font-weight:bold;">0</div>
<div class="t" style="left:34px;top:498.6px;font-size:6.5px;line-height:7.8px;color:#333;font-weight:bold;">0</div>
<div class="t" style="left:34px;top:551.1px;font-size:6.5px;line-height:7.8px;color:#333;font-weight:bold;">4</div>
<div class="t" style="left:34px;top:557.6px;font-size:6.5px;line-height:7.8px;color:#333;font-weight:bold;">5</div>
<div class="t" style="left:34px;top:564.1px;font-size:6.5px;line-height:7.8px;color:#333;font-weight:bold;">0</div>
<svg class="abs" style="left:34px;top:229px;" width="8" height="9" viewBox="0 0 8 9"><path d="M1,1 L7,4.500 L1,8Z" fill="#222"/></svg>
<div class="abs" style="left:46px;top:104px;width:1px;height:509px;background:#8a8a8a"></div>
<!-- /SECTION-RULERS -->
<!-- SECTION-CANVAS -->
<div class="abs" style="left:47px;top:120px;width:858px;height:493px;background:#adadad"></div>
<svg class="abs" style="left:0;top:0" width="1280" height="720" viewBox="0 0 1280 720">
<defs>
<clipPath id="cv"><rect x="47" y="120" width="858" height="493"/></clipPath>
<linearGradient id="irisg" x1="0" y1="236" x2="0" y2="475" gradientUnits="userSpaceOnUse">
<stop offset="0" stop-color="#04303c"/><stop offset=".35" stop-color="#06505f"/><stop offset="1" stop-color="#076a7d"/>
</linearGradient>
<linearGradient id="halog" x1="0" y1="300" x2="0" y2="416" gradientUnits="userSpaceOnUse"><stop offset="0" stop-color="#054857"/><stop offset=".16" stop-color="#06505e"/><stop offset=".4" stop-color="#086476"/><stop offset="1" stop-color="#0a7185"/></linearGradient>
<linearGradient id="pups" x1="0" y1="303" x2="0" y2="400" gradientUnits="userSpaceOnUse"><stop offset="0" stop-color="#054a5a"/><stop offset=".25" stop-color="#05303a"/><stop offset=".6" stop-color="#06171c"/><stop offset="1" stop-color="#06171c"/></linearGradient>
<linearGradient id="pupg" x1="0" y1="303" x2="0" y2="400" gradientUnits="userSpaceOnUse">
<stop offset="0" stop-color="#064e5e"/><stop offset="1" stop-color="#086a7c"/>
</linearGradient>
<clipPath id="irisclip"><path id="irisp" d="M325,225 L636,225 C636,270 635,320 631,345 C626,390 608,440 590,474 L588,482 L352,450 L350,441 C338,400 327,340 325,277 Z"/></clipPath>
<clipPath id="sclclip"><path d="M167.5,376 L192.5,358 L232,330 L270,307 L325,277 L357,260 L395,246 L440,237 L495,234.5 L595,235.5 L636,239 L690,240 L745,246 L793,252.5 L787.5,280 L783.5,305 L780,330 L777,342 L765,397 L745,435 L714,479 L591,475 L440,454 L350,441 L270,430 L192.5,419 Z"/></clipPath>
<filter id="bl" x="-20%" y="-40%" width="140%" height="180%"><feGaussianBlur stdDeviation="1.6"/></filter>
<filter id="soft"><feGaussianBlur stdDeviation=".7"/></filter>
</defs>
<g clip-path="url(#cv)" filter="url(#soft)">
<!-- black lash shape -->
<path fill="#1a1a1a" d="M130,402 L205,330 C225,313 245,297 258,287 C280,270 310,249 332,235 C350,224 375,213 402,207 C430,202 460,199 482,198 C520,197 560,197 580,197 C620,197 650,197 670,198 C700,199 725,202 740,204 C765,206 785,207 800,206 C815,206 825,205 832,204 C845,202 855,199 863,195 C858,203 850,212 845,218 C838,228 830,240 825,248 C818,258 812,268 807,278 C802,287 797,296 793,305 C788,315 785,322 782,330 C780,337 779,340 777,345 C774,365 770,380 766,397 C762,412 758,425 752,440 C746,453 741,466 738,477 C734,487 732,495 731,502 C730,510 730,520 731,530 C732,540 733,546 734,553 L563,514 L440,481 L345,460 L270,445 L162,417 L192,417.5 L167,376 Z"/>
<!-- sclera -->
<path fill="#fafafa" d="M167.5,376 L192.5,358 L232,330 L270,307 L325,277 L357,260 L395,246 L440,237 L495,234.5 L595,235.5 L636,239 L690,240 L745,246 L793,252.5 L787.5,280 L783.5,305 L780,330 L777,342 L765,397 L745,435 L714,479 L591,475 L440,454 L350,441 L270,430 L192.5,419 Z"/>
<!-- iris -->
<g clip-path="url(#sclclip)">
<use href="#irisp" fill="url(#irisg)"/>
<g clip-path="url(#irisclip)">
<path fill="#0c8ba2" filter="url(#soft)" d="M337.5,367.5 C345,360 354,353 363.700,347 C373,341 383,335.500 393,331 C401,327.500 409,324 416,322 L428,321 L514,321 C523,322.500 531,324.500 538.700,326.600 C549,330 559,333.500 568,338 C578,343.500 588,350 597,357 C603,361.500 608,366 611.500,370.400 C611.500,381 610.500,392 608.600,402.400 C604,424 598,446 591,466.600 L589,480 L352,448 L349,434.500 C344,412 340,390 337.500,367.500 Z"/>
<path fill="#14a5bc" filter="url(#soft)" d="M352,388 C360,380 369,373 378,367.500 C389,361 401,356 413,353 L428,352 L514,356 C528,358.500 541,362.500 553,367.500 C563,371.500 573,376 582,380.600 C588,385 592,390.500 594,396.600 C595,399.500 595.500,402 595.500,405 C592,415 587.500,425 582,434.500 C578,440.500 573.500,446 568,450.500 L369.600,428.700 C362,416 356,402.500 352,388 Z"/>
<path fill="url(#halog)" filter="url(#soft)" d="M426,300 L426,372 C426,400 445,416 470.500,416 C496,416 515,400 515,372 L515,300 Z"/>
<ellipse cx="473.500" cy="351.500" rx="32.500" ry="47" fill="url(#pupg)" stroke="url(#pups)" stroke-width="3"/>
</g>
</g>
<!-- highlight -->
<ellipse cx="602" cy="273" rx="83" ry="26.500" fill="#ffffff" transform="rotate(4.500 602 273)" filter="url(#bl)"/>
</g>
<!-- selection -->
<g clip-path="url(#cv)">
<path d="M634,240.500 H507.500 V306.500 H633" fill="none" stroke="#8fb3bd" stroke-width="1" stroke-dasharray="3 3" opacity=".8"/>
<path d="M634,240.500 H688.500 V306.500 H633" fill="none" stroke="#555" stroke-width="1" stroke-dasharray="3 3"/>
<g id="handles" stroke="none" fill="#fff">
<path d="M496,229 l5,0 l-1.5,1.500 l5,5 l1.500,-1.500 l0,5 l-5,0 l1.500,-1.500 l-5,-5 l-1.500,1.500z"/>
<path d="M599,228 l3,3.500 l-2,0 l0,5 l2,0 l-3,3.500 l-3,-3.500 l2,0 l0,-5 l-2,0z"/>
<path d="M700,229 l-5,0 l1.500,1.500 l-5,5 l-1.500,-1.500 l0,5 l5,0 l-1.500,-1.500 l5,-5 l1.500,1.500z"/>
<path d="M495,274 l3.500,-3 l0,2 l5,0 l0,-2 l3.500,3 l-3.500,3 l0,-2 l-5,0 l0,2z"/>
<path fill="#111" d="M689,274 l3.500,-3 l0,2 l5,0 l0,-2 l3.500,3 l-3.500,3 l0,-2 l-5,0 l0,2z"/>
<path d="M496,318 l5,0 l-1.500,-1.500 l5,-5 l1.500,1.500 l0,-5 l-5,0 l1.500,1.500 l-5,5 l-1.500,-1.500z"/>
<path d="M599,306 l3,3.500 l-2,0 l0,5 l2,0 l-3,3.500 l-3,-3.500 l2,0 l0,-5 l-2,0z"/>
<path fill="#111" d="M700,318 l-5,0 l1.500,-1.500 l-5,-5 l-1.500,1.500 l0,-5 l5,0 l-1.500,1.500 l5,5 l1.500,-1.500z"/>
</g>
</g>
</svg>
<!-- /SECTION-CANVAS -->
<!-- SECTION-TOOLBOX -->
<div class="abs" style="left:2px;top:105px;width:25px;height:25px;background:#fff;border:1px solid #e6e6e6;border-radius:3px"></div>
<svg class="abs" style="left:5px;top:108px;opacity:1;" width="18" height="18" viewBox="0 0 16 16"><path d="M4,1.500 L12,9.500 L8.300,9.700 L10.300,14 L8.500,14.800 L6.600,10.500 L4,13Z" fill="#222"/></svg>
<svg class="abs" style="left:5px;top:134px;opacity:1;" width="18" height="18" viewBox="0 0 16 16"><path d="M4,2 L4,14 M4,3 L11,3" stroke="#333" stroke-width="1.600" fill="none"/><path d="M4,5 L9,9 L5.500,9.500Z" fill="#222"/><path d="M10,2.500h1.500 M13,2.500h1.500" stroke="#666"/></svg>
<svg class="abs" style="left:5px;top:160px;opacity:1;" width="18" height="18" viewBox="0 0 16 16"><path d="M1.500,14 Q2,9 5,8 Q5,3 9,3 Q12,3 12,6 Q11,5 9.500,6 Q13,7 14.500,14Z" fill="#555"/><path d="M1,12 Q8,10 15,12 V14.500 H1Z" fill="#777"/></svg>
<svg class="abs" style="left:5px;top:186px;opacity:1;" width="18" height="18" viewBox="0 0 16 16"><circle cx="8" cy="8" r="4" stroke="#555" stroke-width="1.500" fill="none"/><path d="M2,2 L5,5 M14,2 L11,5 M2,14 L5,11 M14,14 L11,11" stroke="#555" stroke-width="1.500"/></svg>
<svg class="abs" style="left:5px;top:213px;opacity:1;" width="18" height="18" viewBox="0 0 16 16"><rect x="2" y="2.500" width="12" height="11.500" stroke="#666" stroke-width="1.400" fill="#fff"/></svg>
<svg class="abs" style="left:5px;top:239px;opacity:1;" width="18" height="18" viewBox="0 0 16 16"><path d="M8,1.500 L14,4.500 V11.500 L8,14.500 L2,11.500 V4.500Z" fill="#777" stroke="#444"/><path d="M2,4.500 L8,7.500 L14,4.500 M8,7.500V14.500" stroke="#444" fill="none"/><path d="M8,7.500 L14,4.500 V11.500 L8,14.500Z" fill="#aaa"/></svg>
<svg class="abs" style="left:5px;top:265px;opacity:1;" width="18" height="18" viewBox="0 0 16 16"><rect x="2.500" y="4" width="11" height="8" rx="3.500" stroke="#888" stroke-width="1.400" fill="#fff"/></svg>
<svg class="abs" style="left:5px;top:291px;opacity:1;" width="18" height="18" viewBox="0 0 16 16"><path d="M8,1.500 L10,5.500 L14.500,6 L11.500,9.500 L12.500,14 L8,12 L3.500,14 L4.500,9.500 L1.500,6 L6,5.500Z" stroke="#888" stroke-width="1.300" fill="#fff"/></svg>
<svg class="abs" style="left:5px;top:317px;opacity:1;" width="18" height="18" viewBox="0 0 16 16"><circle cx="8" cy="8" r="6" fill="#aaa" stroke="#777"/><circle cx="8" cy="8" r="3" fill="none" stroke="#666"/><circle cx="8" cy="8" r="1" fill="#555"/></svg>
<svg class="abs" style="left:5px;top:343px;opacity:1;" width="18" height="18" viewBox="0 0 16 16"><path d="M2,14 L3,10 L11,2 L14,5 L6,13Z" fill="#888" stroke="#555"/><path d="M2,14 L3,10 L6,13Z" fill="#333"/></svg>
<svg class="abs" style="left:5px;top:369px;opacity:1;" width="18" height="18" viewBox="0 0 16 16"><path d="M2,14 L4,8 L10,2 L14,6 L8,12Z" fill="none" stroke="#555" stroke-width="1.300"/><path d="M2,14 L7,9" stroke="#555"/><circle cx="13" cy="13" r="1.200" fill="#555"/></svg>
<svg class="abs" style="left:5px;top:396px;opacity:1;" width="18" height="18" viewBox="0 0 16 16"><path d="M2,14 L4,9 L11,2 L14,5 L7,12Z" fill="#eee" stroke="#777" stroke-width="1.200"/><path d="M2,14 L4,9 L7,12Z" fill="#666"/></svg>
<svg class="abs" style="left:5px;top:423px;opacity:1;" width="18" height="18" viewBox="0 0 16 16"><rect x="2" y="2" width="12" height="12" stroke="#444" stroke-width="1.300" fill="#fff"/><path d="M5,5 H11 M8,5 V12" stroke="#222" stroke-width="1.800"/></svg>
<svg class="abs" style="left:5px;top:449px;opacity:1;" width="18" height="18" viewBox="0 0 16 16"><rect x="7" y="5" width="6" height="9.500" rx="1" fill="#333"/><rect x="8.500" y="2" width="3" height="3" fill="#444"/><path d="M2,3 h1 M4,2 h1 M3,5h1 M5,4h1" stroke="#555"/></svg>
<svg class="abs" style="left:5px;top:475px;opacity:1;" width="18" height="18" viewBox="0 0 16 16"><path d="M2,12 L9,3 L14,7 L7,15Z" fill="#333"/><path d="M2,12 L5,8 L10,12 L7,15Z" fill="#999"/></svg>
<svg class="abs" style="left:5px;top:501px;opacity:1;" width="18" height="18" viewBox="0 0 16 16"><path d="M3,8 L8,3 L13,8 L8,13Z" fill="#555" stroke="#333"/><path d="M8,3 V1.500" stroke="#333"/><path d="M2,10 Q1,13 2.500,14 Q4,13 3,10Z" fill="#28c"/></svg>
<svg class="abs" style="left:5px;top:528px;opacity:1;" width="18" height="18" viewBox="0 0 16 16"><path d="M2,14 L14,2" stroke="#1a6fb5" stroke-width="2"/><rect x="5" y="6" width="6" height="5" fill="#2a8fd5" transform="rotate(-45 8 8)"/><rect x="1" y="12" width="3" height="3" fill="#1a6fb5"/><rect x="12" y="1" width="3" height="3" fill="#1a6fb5"/></svg>
<svg class="abs" style="left:5px;top:554px;opacity:1;" width="18" height="18" viewBox="0 0 16 16"><path d="M8,2 Q12,8 12,11 A4,4 0 0 1 4,11 Q4,8 8,2Z" fill="#333"/></svg>
<svg class="abs" style="left:5px;top:580px;opacity:1;" width="18" height="18" viewBox="0 0 16 16"><path d="M2,14 L14,2" stroke="#555" stroke-width="1.400"/><path d="M2,14 l2,-.5 l-1.500,-1.500Z" fill="#2a8"/></svg>
<!-- /SECTION-TOOLBOX -->
<!-- SECTION-SCROLL -->
<div class="abs" style="left:47px;top:613px;width:858px;height:16px;background:#fafafa"></div>
<div class="abs" style="left:57px;top:613px;width:823px;height:14px;background:#c3c3c3"></div>
<div class="abs" style="left:338px;top:616px;width:228px;height:9px;background:#fdfdfd;border-radius:3px"></div>
<svg class="abs" style="left:47px;top:615px;" width="10" height="12" viewBox="0 0 10 12"><path d="M7,2.500 L3,6 L7,9.500" stroke="#222" stroke-width="1.800" fill="none"/></svg>
<svg class="abs" style="left:883px;top:615px;" width="22" height="12" viewBox="0 0 22 12"><path d="M7,2.500 L3.500,6 L7,9.500" stroke="#222" stroke-width="1.800" fill="none"/><path d="M13,2.500 L16.500,6 L13,9.500" stroke="#222" stroke-width="1.800" fill="none"/></svg>
<div class="abs" style="left:905px;top:104px;width:25px;height:510px;background:#fafafa"></div>
<div class="abs" style="left:905px;top:132px;width:14px;height:458px;background:#c6c6c6"></div>
<div class="abs" style="left:909px;top:321px;width:9px;height:49px;background:#fdfdfd;border-radius:3px"></div>
<svg class="abs" style="left:906px;top:127px;" width="14" height="10" viewBox="0 0 14 10"><path d="M3,7 L7,3 L11,7" stroke="#222" stroke-width="1.800" fill="none"/></svg>
<svg class="abs" style="left:906px;top:590px;" width="14" height="22" viewBox="0 0 14 22"><path d="M3,7 L7,3.500 L11,7" stroke="#222" stroke-width="1.800" fill="none"/><path d="M3,13 L7,16.500 L11,13" stroke="#222" stroke-width="1.800" fill="none"/></svg>
<svg class="abs" style="left:893px;top:106px;" width="12" height="18" viewBox="0 0 12 18"><path d="M6,2 V10" stroke="#333" stroke-width="1.500"/><path d="M3,9 L6,13 L9,9Z" fill="#222"/></svg>
<svg class="abs" style="left:907px;top:106px;" width="14" height="16" viewBox="0 0 14 16"><path d="M2,2 L12,12 M12,2 L2,12" stroke="#aaa" stroke-width="1.300"/><rect x="4.500" y="4.500" width="5" height="5" fill="#eee" stroke="#aaa"/></svg>
<!-- /SECTION-SCROLL -->
<!-- SECTION-DOCK -->
<div class="abs" style="left:921px;top:104px;width:359px;height:527px;background:#f8f8f8"></div>
<div class="abs" style="left:928px;top:126px;width:320px;height:490px;background:#fafafa;border-left:1px solid #eee;border-right:1px solid #e6e6e6"></div>
<div class="abs" style="left:928px;top:104px;width:320px;height:22px;background:#ababab"></div>
<svg class="abs" style="left:932px;top:109px;" width="10" height="12" viewBox="0 0 10 12"><path d="M5,1 L9,6 Q5,8 1,6Z" fill="#555"/><path d="M2,8.500 Q5,7.500 8,8.500 Q5,10.500 2,8.500Z" fill="#555"/></svg>
<div class="t" style="left:942px;top:109.5px;font-size:10px;line-height:12px;color:#444;font-weight:bold;letter-spacing:0.89px;">Isi dan Sapuan (Shift+Ctrl+F)</div>
<svg class="abs" style="left:1207px;top:110px;" width="12" height="12" viewBox="0 0 12 12"><rect x="1.500" y="1.500" width="9" height="9" fill="none" stroke="#888"/><path d="M6,3V9 M3,6H9" stroke="#888"/></svg>
<svg class="abs" style="left:1230px;top:110px;" width="12" height="12" viewBox="0 0 12 12"><rect x="1.500" y="1.500" width="9" height="9" fill="none" stroke="#888"/><path d="M3.500,3.500 L8.500,8.500 M8.500,3.500 L3.500,8.500" stroke="#777" stroke-width="1.300"/></svg>
<div class="abs" style="left:969px;top:137px;width:177px;height:22px;background:#efefef;border:1px solid #e8e8e8;border-radius:2px"></div>
<svg class="abs" style="left:937px;top:140px;" width="11" height="11" viewBox="0 0 11 11"><rect x="1" y="1" width="9" height="9" fill="#cfd9d6" stroke="#bcc"/></svg>
<div class="t" style="left:949px;top:141.5px;font-size:10px;line-height:12px;color:#4a4a4a;font-weight:bold;letter-spacing:-0.04px;">Isi</div>
<svg class="abs" style="left:973px;top:141px;" width="12" height="12" viewBox="0 0 12 12"><rect x="1.500" y="1.500" width="9" height="9" fill="#fafafa" stroke="#666" stroke-width="1.300"/></svg>
<div class="t" style="left:986px;top:142px;font-size:10px;font-weight:bold;line-height:12px;color:#4a4a4a;letter-spacing:0.81px"><u>C</u>at sapuan</div>
<svg class="abs" style="left:1060px;top:142px;" width="12" height="11" viewBox="0 0 12 11"><path d="M1,1.500H11 M1,5.500H11 M1,9.500H11" stroke="#555" stroke-width="1.100"/></svg>
<div class="t" style="left:1073px;top:142px;font-size:10px;font-weight:bold;line-height:12px;color:#4a4a4a;letter-spacing:0.70px"><u>G</u>aya sapuan</div>
<svg class="abs" style="left:946px;top:174px;" width="12" height="12" viewBox="0 0 12 12"><path d="M2.500,2.500 L9.500,9.500 M9.500,2.500 L2.500,9.500" stroke="#222" stroke-width="2.200"/></svg>
<div class="abs" style="left:966px;top:172px;width:16px;height:17px;background:linear-gradient(135deg,#7fa9c9,#a9c9e2);border:1.500px solid #7f8f9b"></div>
<div class="abs" style="left:989px;top:172px;width:16px;height:17px;background:linear-gradient(90deg,#dfe7ee,#b9cbdb);border:1.500px solid #94a3ad"></div>
<div class="abs" style="left:1012px;top:172px;width:16px;height:17px;background:radial-gradient(circle,#dde2f6,#aebbd2);border:1.500px solid #8d9aa8"></div>
<div class="abs" style="left:1034px;top:172px;width:16px;height:17px;background:#dbe8f1;border:1.500px solid #8898a5"></div>
<div class="abs" style="left:1041.5px;top:173px;width:1px;height:15px;background:#8aa"></div>
<div class="abs" style="left:1035px;top:180px;width:14px;height:1px;background:#8aa"></div>
<div class="abs" style="left:1056px;top:172px;width:17px;height:17px;background:#fcfcfc;border:2px solid #8896a3;border-right-color:#556;border-bottom-color:#556"></div>
<div class="t" style="left:1081px;top:170.9px;font-size:16px;line-height:19.2px;color:#111;font-weight:bold;">?</div>
<svg class="abs" style="left:1199px;top:172px;" width="13" height="15" viewBox="0 0 13 15"><path d="M1,2 H12 V8 Q12,13 6.500,13 Q1,13 1,8Z" fill="#111"/><path d="M5,2 V9 H8 V2Z" fill="#fafafa"/></svg>
<svg class="abs" style="left:1217px;top:172px;" width="13" height="15" viewBox="0 0 13 15"><path d="M1,2 H5 L6.500,3.500 L8,2 H12 V8 Q12,13 6.500,13 Q1,13 1,8Z" fill="#111"/></svg>
<div class="abs" style="left:938px;top:196px;width:296px;height:228px;background:#f9f9f9;border:1px solid #ececec;border-radius:3px"></div>
<div class="t" style="left:1051px;top:203.5px;font-size:10px;line-height:12px;color:#4a4a4a;font-weight:bold;letter-spacing:1.05px;">Warna datar</div>
<div class="abs" style="left:944px;top:252px;width:284px;height:141px;background:#fafafa;border:1px solid #e9e9e9"></div>
<div class="abs" style="left:944px;top:232px;width:36px;height:20px;background:#efefef"></div>
<div class="abs" style="left:1012px;top:232px;width:168px;height:20px;background:#efefef"></div>
<div class="t" style="left:949px;top:236px;font-size:10px;line-height:12px;color:#4a4a4a;font-weight:bold;letter-spacing:0.59px;">RGB</div>
<div class="t" style="left:986px;top:234.3px;font-size:9.5px;line-height:11.4px;color:#444;font-weight:bold;letter-spacing:0.33px;">HSL</div>
<div class="t" style="left:1021px;top:236px;font-size:10px;line-height:12px;color:#4a4a4a;font-weight:bold;letter-spacing:0.64px;">CMYK</div>
<div class="t" style="left:1068px;top:236px;font-size:10px;line-height:12px;color:#4a4a4a;font-weight:bold;letter-spacing:0.80px;">Roda Warna</div>
<div class="t" style="left:1148px;top:236px;font-size:10px;line-height:12px;color:#4a4a4a;font-weight:bold;letter-spacing:0.93px;">CMS</div>
<div class="abs" style="left:966px;top:257.5px;width:190px;height:18px;background:linear-gradient(90deg,#f00 0%,#ff0 17%,#0f0 33%,#0ff 50%,#00f 67%,#f0f 83%,#f00 100%);border:2px solid #1a1a1a;border-radius:2px;box-shadow:0 1px 1px rgba(0,0,0,.25)"></div>
<div class="abs" style="left:966px;top:280.5px;width:190px;height:18px;background:#fff;border:2px solid #1a1a1a;border-radius:2px;box-shadow:0 1px 1px rgba(0,0,0,.25)"></div>
<div class="abs" style="left:966px;top:303.5px;width:190px;height:18px;background:linear-gradient(90deg,#000,#fff);border:2px solid #1a1a1a;border-radius:2px;box-shadow:0 1px 1px rgba(0,0,0,.25)"></div>
<div class="abs" style="left:966px;top:326px;width:190px;height:18px;background:linear-gradient(90deg,rgba(255,255,255,0),#fff 75%),repeating-conic-gradient(#555 0% 25%,#aaa 0% 50%) 0 0/14px 14px;border:2px solid #1a1a1a;border-radius:2px;box-shadow:0 1px 1px rgba(0,0,0,.25)"></div>
<div class="t" style="left:951px;top:260px;font-size:10px;font-weight:bold;line-height:13px;color:#4a4a4a"><u>H</u></div>
<div class="t" style="left:951px;top:283px;font-size:10px;font-weight:bold;line-height:13px;color:#4a4a4a"><u>S</u></div>
<div class="t" style="left:951px;top:306px;font-size:10px;font-weight:bold;line-height:13px;color:#4a4a4a"><u>L</u></div>
<div class="t" style="left:951px;top:328.5px;font-size:10px;font-weight:bold;line-height:13px;color:#4a4a4a"><u>A</u></div>
<div class="abs" style="left:1167px;top:257px;width:56px;height:19px;background:#fff;border:1px solid #efefef;border-radius:2px"></div>
<div class="t" style="left:1171px;top:260.8px;font-size:9.5px;line-height:11.4px;color:#666;font-weight:bold;">0</div>
<svg class="abs" style="left:1208px;top:259.5px;" width="9" height="14" viewBox="0 0 9 14"><path d="M1.500,5.500 L4.500,2.500 L7.500,5.500 M1.500,8.500 L4.500,11.500 L7.500,8.500" stroke="#333" stroke-width="1.400" fill="none"/></svg>
<div class="abs" style="left:1167px;top:280px;width:56px;height:19px;background:#fff;border:1px solid #efefef;border-radius:2px"></div>
<div class="t" style="left:1171px;top:283.8px;font-size:9.5px;line-height:11.4px;color:#666;font-weight:bold;">0</div>
<svg class="abs" style="left:1208px;top:282.5px;" width="9" height="14" viewBox="0 0 9 14"><path d="M1.500,5.500 L4.500,2.500 L7.500,5.500 M1.500,8.500 L4.500,11.500 L7.500,8.500" stroke="#333" stroke-width="1.400" fill="none"/></svg>
<div class="abs" style="left:1167px;top:303px;width:56px;height:19px;background:#fff;border:1px solid #efefef;border-radius:2px"></div>
<div class="t" style="left:1171px;top:306.8px;font-size:9.5px;line-height:11.4px;color:#666;font-weight:bold;">255</div>
<svg class="abs" style="left:1208px;top:305.5px;" width="9" height="14" viewBox="0 0 9 14"><path d="M1.500,5.500 L4.500,2.500 L7.500,5.500 M1.500,8.500 L4.500,11.500 L7.500,8.500" stroke="#999" stroke-width="1.400" fill="none"/></svg>
<div class="abs" style="left:1167px;top:325.5px;width:56px;height:19px;background:#fff;border:1px solid #efefef;border-radius:2px"></div>
<div class="t" style="left:1171px;top:329.3px;font-size:9.5px;line-height:11.4px;color:#666;font-weight:bold;">255</div>
<svg class="abs" style="left:1208px;top:328px;" width="9" height="14" viewBox="0 0 9 14"><path d="M1.500,5.500 L4.500,2.500 L7.500,5.500 M1.500,8.500 L4.500,11.500 L7.500,8.500" stroke="#999" stroke-width="1.400" fill="none"/></svg>
<svg class="abs" style="left:943px;top:399px;" width="22" height="22" viewBox="0 0 22 22"><path d="M5,2 L18,15 L3,19Z" fill="#e4e4e4" stroke="#d6d6d6"/></svg>
<svg class="abs" style="left:968px;top:399px;" width="22" height="22" viewBox="0 0 22 22"><circle cx="11" cy="11" r="9.500" fill="#d6d6d6"/><circle cx="11" cy="11" r="3.500" fill="#f4f4f4"/></svg>
<div class="t" style="left:1142px;top:403.8px;font-size:9.5px;line-height:11.4px;color:#444;font-weight:bold;letter-spacing:-0.82px;">RGBA:</div>
<div class="abs" style="left:1177px;top:400px;width:49px;height:18px;background:#fff;border:1px solid #efefef;border-radius:2px"></div>
<div class="t" style="left:1181px;top:403.8px;font-size:9.5px;line-height:11.4px;color:#555;font-weight:bold;letter-spacing:0.59px;">ffffffff</div>
<div class="abs" style="left:930px;top:428px;width:316px;height:1px;background:#ececec"></div>
<div class="t" style="left:935px;top:433px;font-size:10px;font-weight:bold;line-height:12px;color:#4a4a4a;letter-spacing:.3px">B<u>l</u>ur:</div>
<div class="abs" style="left:945px;top:457px;width:236px;height:4px;background:#cfcfcf;border-radius:2px"></div>
<div class="abs" style="left:961px;top:452px;width:14px;height:14px;background:#fafafa;border:1px solid #bbb;border-radius:50%"></div>
<svg class="abs" style="left:961px;top:451px;" width="18" height="22" viewBox="0 0 18 22"><path d="M6,2 Q7.500,1 8.500,2.500 V9 Q10,8 11,9 Q12.500,8.500 13.500,10 Q15.500,10 15.500,12 V16 Q15,20 11,20.500 H9 Q6.500,20 5,17 L2.500,12 Q2.500,10 4.500,10.500 L6,12.500Z" fill="#fff" stroke="#111" stroke-width="1.300"/></svg>
<div class="abs" style="left:1186px;top:449px;width:40px;height:20px;background:#fff;border:1px solid #efefef;border-radius:2px"></div>
<div class="t" style="left:1193px;top:453.8px;font-size:9.5px;line-height:11.4px;color:#555;font-weight:bold;letter-spacing:1.27px;">5,3</div>
<svg class="abs" style="left:1229.5px;top:452.5px;" width="9" height="14" viewBox="0 0 9 14"><path d="M1.500,5.500 L4.500,2.500 L7.500,5.500 M1.500,8.500 L4.500,11.500 L7.500,8.500" stroke="#222" stroke-width="1.400" fill="none"/></svg>
<div class="t" style="left:935px;top:479px;font-size:10px;line-height:12px;color:#4a4a4a;font-weight:bold;letter-spacing:0.85px;">Opasitas, %</div>
<div class="abs" style="left:945px;top:504px;width:232px;height:4px;background:#cfcfcf;border-radius:2px"></div>
<div class="abs" style="left:1166px;top:499px;width:14px;height:14px;background:#ececec;border:1px solid #c4c4c4;border-radius:50%"></div>
<div class="abs" style="left:1186px;top:496px;width:40px;height:20px;background:#fff;border:1px solid #efefef;border-radius:2px"></div>
<div class="t" style="left:1193px;top:500.8px;font-size:9.5px;line-height:11.4px;color:#555;font-weight:bold;letter-spacing:0.85px;">100,0</div>
<svg class="abs" style="left:1229.5px;top:499.5px;" width="9" height="14" viewBox="0 0 9 14"><path d="M1.500,5.500 L4.500,2.500 L7.500,5.500 M1.500,8.500 L4.500,11.500 L7.500,8.500" stroke="#555" stroke-width="1.400" fill="none"/></svg>
<!-- /SECTION-DOCK -->
<!-- SECTION-SNAP -->
<div class="abs" style="left:1249px;top:104px;width:31px;height:527px;background:#f9f9f9;border-left:1px solid #ededed"></div>
<svg class="abs" style="left:1255.5px;top:107.5px;opacity:1;" width="19" height="19" viewBox="0 0 16 16"><path d="M3,3 L15,15" stroke="#333" stroke-width="1.600"/><circle cx="3.500" cy="3.500" r="2.500" fill="#44a"/><path d="M9,11 L14,16 L16,13Z" fill="#2a7"/></svg>
<svg class="abs" style="left:1255.5px;top:147.5px;opacity:1;" width="19" height="19" viewBox="0 0 16 16"><path d="M4,4 H16 M4,4 V16" stroke="#666" stroke-width="1.600"/><circle cx="4" cy="4" r="2.800" fill="#44a"/></svg>
<svg class="abs" style="left:1255.5px;top:180.5px;opacity:1;" width="19" height="19" viewBox="0 0 16 16"><path d="M4,13 H14 V4" stroke="#e4e4e4" stroke-width="1.500" fill="none"/></svg>
<svg class="abs" style="left:1255.5px;top:213.5px;opacity:1;" width="19" height="19" viewBox="0 0 16 16"><path d="M4,13 H14 V4" stroke="#e0e0e0" stroke-width="1.500" fill="none"/></svg>
<svg class="abs" style="left:1255.5px;top:244.5px;opacity:1;" width="19" height="19" viewBox="0 0 16 16"><path d="M4,13 H14 V4" stroke="#e0e0e0" stroke-width="1.500" fill="none"/></svg>
<svg class="abs" style="left:1255.5px;top:274.5px;opacity:1;" width="19" height="19" viewBox="0 0 16 16"><path d="M4,13 H14 V4" stroke="#e4e4e4" stroke-width="1.500" fill="none"/><circle cx="8" cy="8" r="1" fill="#ccc"/></svg>
<svg class="abs" style="left:1255.5px;top:313.5px;opacity:1;" width="19" height="19" viewBox="0 0 16 16"><path d="M3,10 Q6,4 10,5 Q12,12 17,14" stroke="#667" stroke-width="1.600" fill="none"/><circle cx="10" cy="5" r="2.500" fill="#33a"/></svg>
<svg class="abs" style="left:1255.5px;top:345.5px;opacity:1;" width="19" height="19" viewBox="0 0 16 16"><path d="M3,3 Q13,5 13,14" stroke="#384" stroke-width="1.600" fill="none"/><path d="M9,11 L13,16 L16,10Z" fill="#384"/></svg>
<svg class="abs" style="left:1255.5px;top:377.5px;opacity:1;" width="19" height="19" viewBox="0 0 16 16"><path d="M4,15 L15,5" stroke="#ddd" stroke-width="1.600"/></svg>
<svg class="abs" style="left:1255.5px;top:410.5px;opacity:1;" width="19" height="19" viewBox="0 0 16 16"><path d="M3,3 Q13,5 12,14" stroke="#384" stroke-width="1.600" fill="none"/><path d="M8,12 L12,17 L15,11Z" fill="#a44"/></svg>
<svg class="abs" style="left:1255.5px;top:439.5px;opacity:1;" width="19" height="19" viewBox="0 0 16 16"><path d="M3,3 Q10,4 10,10 L15,13" stroke="#456" stroke-width="1.600" fill="none"/><path d="M7,9 L10,14 L13,8Z" fill="#384"/></svg>
<svg class="abs" style="left:1255.5px;top:472.5px;opacity:1;" width="19" height="19" viewBox="0 0 16 16"><path d="M3,16 L16,3" stroke="#c33" stroke-width="2"/><circle cx="6.500" cy="12.500" r="2" fill="#3a5"/><circle cx="12.500" cy="6.500" r="2" fill="#3a5"/></svg>
<svg class="abs" style="left:1255.5px;top:500.5px;opacity:1;" width="19" height="19" viewBox="0 0 16 16"><path d="M4,15 H15 V4" stroke="#999" stroke-width="1.500" fill="none"/><circle cx="9" cy="9" r="2" fill="#3a5"/></svg>
<svg class="abs" style="left:1255.5px;top:532.5px;opacity:1;" width="19" height="19" viewBox="0 0 16 16"><path d="M4,16 H15 V4" stroke="#888" stroke-width="1.300" fill="none" stroke-dasharray="1.500 1"/><path d="M8,4 V12 M4,8 H12" stroke="#333" stroke-width="1.600"/></svg>
<svg class="abs" style="left:1255.5px;top:577.5px;opacity:1;" width="19" height="19" viewBox="0 0 16 16"><rect x="4" y="3" width="11" height="13" fill="#eee" stroke="#444" stroke-width="1.500"/><path d="M6,5 H13 V14 H6Z" fill="#ccc"/></svg>
<svg class="abs" style="left:1260px;top:611px;" width="10" height="12" viewBox="0 0 10 12"><path d="M3,2.500 L7,6 L3,9.500" stroke="#222" stroke-width="1.800" fill="none"/></svg>
<div class="abs" style="left:1256px;top:137px;width:18px;height:1px;background:#ebebeb"></div>
<div class="abs" style="left:1256px;top:304px;width:18px;height:1px;background:#ebebeb"></div>
<div class="abs" style="left:1256px;top:566px;width:18px;height:1px;background:#ebebeb"></div>
<!-- /SECTION-SNAP -->
<!-- SECTION-PALETTE -->
<div class="abs" style="left:0px;top:629px;width:1280px;height:31px;background:#f8f8f8"></div>
<div class="abs" style="left:14px;top:631.5px;width:1241.34px;height:13px;background:linear-gradient(90deg,#000000 0.00px,#000000 12.17px,#1a1a1a 12.17px,#1a1a1a 24.34px,#333333 24.34px,#333333 36.51px,#4d4d4d 36.51px,#4d4d4d 48.68px,#666666 48.68px,#666666 60.85px,#808080 60.85px,#808080 73.02px,#999999 73.02px,#999999 85.19px,#b3b3b3 85.19px,#b3b3b3 97.36px,#cccccc 97.36px,#cccccc 109.53px,#e6e6e6 109.53px,#e6e6e6 121.70px,#ececec 121.70px,#ececec 133.87px,#f2f2f2 133.87px,#f2f2f2 146.04px,#f9f9f9 146.04px,#f9f9f9 158.21px,#ffffff 158.21px,#ffffff 170.38px,#800000 170.38px,#800000 182.55px,#ff0000 182.55px,#ff0000 194.72px,#808000 194.72px,#808000 206.89px,#ffff00 206.89px,#ffff00 219.06px,#008000 219.06px,#008000 231.23px,#00ff00 231.23px,#00ff00 243.40px,#008080 243.40px,#008080 255.57px,#00ffff 255.57px,#00ffff 267.74px,#000080 267.74px,#000080 279.91px,#0000ff 279.91px,#0000ff 292.08px,#800080 292.08px,#800080 304.25px,#ff00ff 304.25px,#ff00ff 316.42px,#2b0000 316.42px,#2b0000 328.59px,#550000 328.59px,#550000 340.76px,#800000 340.76px,#800000 352.93px,#aa0000 352.93px,#aa0000 365.10px,#d40000 365.10px,#d40000 377.27px,#ff0000 377.27px,#ff0000 389.44px,#ff2a2a 389.44px,#ff2a2a 401.61px,#ff5555 401.61px,#ff5555 413.78px,#ff8080 413.78px,#ff8080 425.95px,#ffaaaa 425.95px,#ffaaaa 438.12px,#ffd5d5 438.12px,#ffd5d5 450.29px,#280b0b 450.29px,#280b0b 462.46px,#501616 462.46px,#501616 474.63px,#782121 474.63px,#782121 486.80px,#a02c2c 486.80px,#a02c2c 498.97px,#c83737 498.97px,#c83737 511.14px,#d35f5f 511.14px,#d35f5f 523.31px,#de8787 523.31px,#de8787 535.48px,#e9afaf 535.48px,#e9afaf 547.65px,#f4d7d7 547.65px,#f4d7d7 559.82px,#241c1c 559.82px,#241c1c 571.99px,#483737 571.99px,#483737 584.16px,#6c5353 584.16px,#6c5353 596.33px,#916f6f 596.33px,#916f6f 608.50px,#ac9393 608.50px,#ac9393 620.67px,#c8b7b7 620.67px,#c8b7b7 632.84px,#e3dbdb 632.84px,#e3dbdb 645.01px,#2b1100 645.01px,#2b1100 657.18px,#552200 657.18px,#552200 669.35px,#803300 669.35px,#803300 681.52px,#aa4400 681.52px,#aa4400 693.69px,#d45500 693.69px,#d45500 705.86px,#ff6600 705.86px,#ff6600 718.03px,#ff7f2a 718.03px,#ff7f2a 730.20px,#ff9955 730.20px,#ff9955 742.37px,#ffb380 742.37px,#ffb380 754.54px,#ffccaa 754.54px,#ffccaa 766.71px,#ffe6d5 766.71px,#ffe6d5 778.88px,#28170b 778.88px,#28170b 791.05px,#502d16 791.05px,#502d16 803.22px,#784421 803.22px,#784421 815.39px,#a05a2c 815.39px,#a05a2c 827.56px,#c87137 827.56px,#c87137 839.73px,#d38d5f 839.73px,#d38d5f 851.90px,#deaa87 851.90px,#deaa87 864.07px,#e9c6af 864.07px,#e9c6af 876.24px,#f4e3d7 876.24px,#f4e3d7 888.41px,#241f1c 888.41px,#241f1c 900.58px,#483e37 900.58px,#483e37 912.75px,#6c5d53 912.75px,#6c5d53 924.92px,#917c6f 924.92px,#917c6f 937.09px,#ac9d93 937.09px,#ac9d93 949.26px,#c8beb7 949.26px,#c8beb7 961.43px,#e3dedb 961.43px,#e3dedb 973.60px,#2b2200 973.60px,#2b2200 985.77px,#554400 985.77px,#554400 997.94px,#806600 997.94px,#806600 1010.11px,#aa8800 1010.11px,#aa8800 1022.28px,#d4aa00 1022.28px,#d4aa00 1034.45px,#ffcc00 1034.45px,#ffcc00 1046.62px,#ffd42a 1046.62px,#ffd42a 1058.79px,#ffdd55 1058.79px,#ffdd55 1070.96px,#ffe680 1070.96px,#ffe680 1083.13px,#ffeeaa 1083.13px,#ffeeaa 1095.30px,#fff6d5 1095.30px,#fff6d5 1107.47px,#28220b 1107.47px,#28220b 1119.64px,#504416 1119.64px,#504416 1131.81px,#786721 1131.81px,#786721 1143.98px,#a0892c 1143.98px,#a0892c 1156.15px,#c8ab37 1156.15px,#c8ab37 1168.32px,#d3bc5f 1168.32px,#d3bc5f 1180.49px,#decd87 1180.49px,#decd87 1192.66px,#e9ddaf 1192.66px,#e9ddaf 1204.83px,#f4eed7 1204.83px,#f4eed7 1217.00px,#24221c 1217.00px,#24221c 1229.17px,#484537 1229.17px,#484537 1241.34px)"></div>
<svg class="abs" style="left:0px;top:631px;" width="14" height="14" viewBox="0 0 14 14"><rect x="0" y="0" width="14" height="14" fill="#fff"/><path d="M2,2 L12,12 M12,2 L2,12" stroke="#c22" stroke-width="1.800"/></svg>
<svg class="abs" style="left:1264px;top:632px;" width="12" height="12" viewBox="0 0 12 12"><path d="M8,2.500 L4,6 L8,9.500" stroke="#222" stroke-width="1.800" fill="none"/></svg>
<div class="abs" style="left:14px;top:648.5px;width:1195px;height:10px;background:#d2d2d2;border-radius:2px"></div>
<div class="abs" style="left:15px;top:649px;width:290px;height:9px;background:#fefefe;border-radius:3px"></div>
<svg class="abs" style="left:2px;top:648px;" width="10" height="11" viewBox="0 0 10 11"><path d="M7,2 L3,5.500 L7,9" stroke="#ddd" stroke-width="1.600" fill="none"/></svg>
<svg class="abs" style="left:1216px;top:648px;" width="34" height="11" viewBox="0 0 34 11"><path d="M7,2 L3.500,5.500 L7,9" stroke="#ddd" stroke-width="1.600" fill="none"/><path d="M25,2 L28.500,5.500 L25,9" stroke="#222" stroke-width="1.800" fill="none"/></svg>
<!-- /SECTION-PALETTE -->
<!-- SECTION-STATUS -->
<div class="abs" style="left:0px;top:660px;width:1280px;height:29px;background:#f9f9f9"></div>
<div class="t" style="left:3px;top:661.8px;font-size:9.5px;line-height:11.4px;color:#444;font-weight:bold;letter-spacing:-0.52px;">Isi</div>
<div class="t" style="left:3px;top:674.3px;font-size:9.5px;line-height:11.4px;color:#444;font-weight:bold;letter-spacing:-0.38px;">Sapuan</div>
<div class="t" style="left:56px;top:674.3px;font-size:9.5px;line-height:11.4px;color:#444;font-weight:bold;font-style:italic;letter-spacing:0.15px;">Tidak ada</div>
<div class="t" style="left:118px;top:667.8px;font-size:9.5px;line-height:11.4px;color:#555;font-weight:bold;letter-spacing:-0.77px;">O:</div>
<div class="abs" style="left:131px;top:664px;width:36px;height:19px;background:#fff;border:1px solid #eee;border-radius:2px"></div>
<div class="t" style="left:136px;top:667.8px;font-size:9.5px;line-height:11.4px;color:#444;font-weight:bold;letter-spacing:-0.28px;">100</div>
<svg class="abs" style="left:155px;top:666px;" width="9" height="15" viewBox="0 0 9 15"><path d="M1.500,5.500 L4.500,2.500 L7.500,5.500 M1.500,9.500 L4.500,12.500 L7.500,9.500" stroke="#444" stroke-width="1.500" fill="none"/></svg>
<svg class="abs" style="left:174px;top:667px;" width="12" height="12" viewBox="0 0 12 12"><path d="M2,3H10 M2,6H10 M2,9H10" stroke="#888" stroke-width="1.600"/></svg>
<svg class="abs" style="left:191px;top:666px;" width="12" height="14" viewBox="0 0 12 14"><rect x="2.500" y="6.500" width="7" height="6" fill="#eee" stroke="#ccc"/><path d="M4,6.500 V4.500 A2,2 0 0 1 8,4.500 V6.500" stroke="#ccc" fill="none"/></svg>
<div class="abs" style="left:208px;top:664px;width:84px;height:20px;background:#fff;border:1px solid #eee;border-radius:2px"></div>
<div class="t" style="left:213px;top:667.5px;font-size:10px;line-height:12px;color:#333;font-weight:bold;letter-spacing:0.31px;">•Layer 1</div>
<svg class="abs" style="left:274px;top:669px;" width="12" height="9" viewBox="0 0 12 9"><path d="M2,2 L6,6.500 L10,2" stroke="#333" stroke-width="1.800" fill="none"/></svg>
<div class="t" style="left:297.5px;top:668.5px;font-size:11px;line-height:13px;color:#2c2c2c"><span style="letter-spacing:0.49px"><b>Elips</b>; <i>filtered</i> pada lapis <b>Layer 1</b>.</span><span style="letter-spacing:1.00px"> Click selection to toggle scale/rotation handles.</span></div>
<div class="t" style="left:1137px;top:661.6px;font-size:9px;line-height:10.8px;color:#555;letter-spacing:-0.25px;">X:</div>
<div class="t" style="left:1137px;top:674.6px;font-size:9px;line-height:10.8px;color:#555;letter-spacing:0.00px;">Y:</div>
<div class="t" style="left:1152px;top:661.3px;font-size:9.5px;line-height:11.4px;color:#444;font-weight:bold;letter-spacing:1.33px;font-family:'Liberation Mono',monospace;">652,14</div>
<div class="t" style="left:1152px;top:674.3px;font-size:9.5px;line-height:11.4px;color:#444;font-weight:bold;letter-spacing:1.33px;font-family:'Liberation Mono',monospace;">740,71</div>
<div class="t" style="left:1199px;top:667.6px;font-size:9px;line-height:10.8px;color:#555;letter-spacing:-0.50px;">Z:</div>
<div class="abs" style="left:1212px;top:664px;width:46px;height:20px;background:#fff;border:1px solid #eee;border-radius:2px"></div>
<div class="t" style="left:1218px;top:667.8px;font-size:9.5px;line-height:11.4px;color:#444;font-weight:bold;letter-spacing:-0.07px;">148%</div>
<svg class="abs" style="left:1249px;top:666px;" width="9" height="15" viewBox="0 0 9 15"><path d="M1.500,5.500 L4.500,2.500 L7.500,5.500 M1.500,9.500 L4.500,12.500 L7.500,9.500" stroke="#222" stroke-width="1.600" fill="none"/></svg>
<!-- /SECTION-STATUS -->
<!-- SECTION-TASKBAR -->
<div class="abs" style="left:0px;top:689px;width:1280px;height:31px;background:linear-gradient(#e9e9e9,#f3f3f3 18%,#f1f1f1 80%,#e2e2e2 90%,#9c9c9c 97%);border-top:1px solid #d6d6d6"></div>
<svg class="abs" style="left:2px;top:692px;" width="26" height="26" viewBox="0 0 26 26"><path d="M13,1 L24,24 H17.500 L13,14 L8.500,24 H2Z" fill="#2f4a4f"/><path d="M3,18 Q13,11 23,18 L25,25 H1Z" fill="#4f747a"/><path d="M13,7 L16.500,16 H9.500Z" fill="#6f9a9e"/></svg>
<svg class="abs" style="left:37px;top:693px;" width="24" height="24" viewBox="0 0 24 24"><circle cx="12" cy="12" r="10.500" fill="#2d62b4"/><circle cx="12" cy="12" r="10.500" fill="none" stroke="#1d3f7c" stroke-width="1.200"/><ellipse cx="10" cy="8.500" rx="5" ry="3.500" fill="#d9e7f7"/><path d="M5,14 Q12,18 19,13" stroke="#8fb4e2" stroke-width="2" fill="none"/></svg>
<svg class="abs" style="left:67px;top:694px;" width="24" height="22" viewBox="0 0 24 22"><rect x="1" y="2" width="22" height="19" rx="1.500" fill="#2f79c4"/><path d="M1,2 H10 L12,5 H23 V8 H1Z" fill="#1d5796"/><path d="M6,9 L18,9 L12,15Z" fill="#e9f2fb"/></svg>
<svg class="abs" style="left:98px;top:699px;" width="30" height="12" viewBox="0 0 30 12"><circle cx="5" cy="6" r="4" fill="#c0392b"/><circle cx="14.500" cy="6" r="4" fill="#2f7fb5"/><circle cx="24" cy="6" r="4" fill="#5aa445"/></svg>
<div class="abs" style="left:141px;top:697px;width:11px;height:12px;background:#8b8b8b"></div>
<div class="t" style="left:158px;top:699.3px;font-size:9.5px;line-height:11.4px;color:#b4b4b4;font-weight:bold;letter-spacing:0.90px;">xrx : pong – Konsole</div>
<div class="abs" style="left:339px;top:691px;width:198px;height:28px;background:#fcfcfc;border:1px solid #e2e2e2;border-radius:3px"></div>
<svg class="abs" style="left:345px;top:698px;" width="12" height="12" viewBox="0 0 12 12"><path d="M6,0.500 L11.500,6 Q9,7.500 6,7 Q3,7.500 0.500,6Z" fill="#222"/><path d="M2.500,9 Q6,8 9.500,9 Q6,11.500 2.500,9Z" fill="#222"/></svg>
<div class="t" style="left:362px;top:699.1px;font-size:9px;line-height:10.8px;color:#333;font-weight:bold;letter-spacing:1.16px;">Dokumen baru 1 - Inkscape</div>
<svg class="abs" style="left:547px;top:698px;" width="14" height="12" viewBox="0 0 14 12"><rect x="1" y="2" width="12" height="9" fill="#d2d2d2"/><rect x="1" y="1" width="6" height="3" fill="#c4c4c4"/></svg>
<div class="t" style="left:566px;top:699.3px;font-size:9.5px;line-height:11.4px;color:#c4c4c4;font-weight:bold;letter-spacing:1.06px;">proyek mangat weblu luong</div>
<svg class="abs" style="left:751px;top:698px;" width="14" height="14" viewBox="0 0 14 14"><circle cx="7" cy="7" r="6" fill="#9a9a9a"/><circle cx="7" cy="7" r="2.500" fill="#e4e4e4"/></svg>
<div class="t" style="left:770px;top:699.3px;font-size:9.5px;line-height:11.4px;color:#bdbdbd;font-weight:bold;letter-spacing:0.77px;">SimpleScreenRecorder</div>
<div class="abs" style="left:952px;top:692px;width:29px;height:25px;background:linear-gradient(100deg,#d9d68c 0%,#8fc1a0 30%,#5aa3a3 60%,#4a8ea6 100%);border-right:2px solid #7a8f96"></div>
<svg class="abs" style="left:986px;top:692px;" width="26" height="26" viewBox="0 0 26 26"><circle cx="13" cy="13" r="11" fill="#5e080e"/><circle cx="13" cy="13" r="8.500" fill="#c4161f"/><ellipse cx="11" cy="9.500" rx="4" ry="2.500" fill="#f08a8a" opacity=".8"/></svg>
<svg class="abs" style="left:1018px;top:697px;" width="20" height="17" viewBox="0 0 20 17"><rect x="1" y="2" width="17" height="14" rx="1" fill="#2f8fdc"/><path d="M1,2 H8 L10,4.500 H18 V6 H1Z" fill="#1f6fb8"/></svg>
<svg class="abs" style="left:1043px;top:695px;" width="20" height="20" viewBox="0 0 20 20"><circle cx="10" cy="10" r="7" fill="none" stroke="#8f8f8f" stroke-width="2"/><path d="M10,1 L14,4 L10,6Z M10,19 L6,16 L10,14Z" fill="#8f8f8f"/></svg>
<svg class="abs" style="left:1069px;top:695px;" width="18" height="20" viewBox="0 0 18 20"><path d="M9,2 Q14,2 14,9 L16,15 H2 L4,9 Q4,2 9,2Z" fill="none" stroke="#c4c4c4" stroke-width="1.500"/><circle cx="9" cy="17.500" r="1.500" fill="#c4c4c4"/></svg>
<svg class="abs" style="left:1094px;top:695px;" width="20" height="20" viewBox="0 0 20 20"><circle cx="10" cy="10" r="7.500" fill="none" stroke="#b5b5b5" stroke-width="1.500"/><path d="M10,6 V14" stroke="#999" stroke-width="2"/></svg>
<svg class="abs" style="left:1117px;top:694px;" width="22" height="22" viewBox="0 0 22 22"><path d="M2,8 H6 L11,3 V19 L6,14 H2Z" fill="none" stroke="#b4b4b4" stroke-width="1.500"/><path d="M14,7 Q17,11 14,15 M16.500,4.500 Q21,11 16.500,17.500" stroke="#cfcfcf" stroke-width="1.300" fill="none"/></svg>
<svg class="abs" style="left:1142px;top:694px;" width="20" height="22" viewBox="0 0 20 22"><rect x="6" y="2" width="10" height="18" rx="1.500" fill="none" stroke="#b0b0b0" stroke-width="1.500"/><rect x="2" y="8" width="7" height="12" rx="1" fill="#f1f1f1" stroke="#b0b0b0" stroke-width="1.500"/></svg>
<svg class="abs" style="left:1168px;top:696px;" width="22" height="18" viewBox="0 0 22 18"><path d="M2,6 Q11,-2 20,6 M5,9.500 Q11,4 17,9.500 M8,13 Q11,10 14,13" stroke="#d6d6d6" stroke-width="1.600" fill="none"/><circle cx="11" cy="15.500" r="1.300" fill="#d6d6d6"/></svg>
<svg class="abs" style="left:1194px;top:700px;" width="12" height="10" viewBox="0 0 12 10"><path d="M2,7 L6,3 L10,7" stroke="#dcdcdc" stroke-width="1.500" fill="none"/></svg>
<div class="t" style="left:1224px;top:694.8px;font-size:17px;line-height:20.4px;color:#cdcdcd;letter-spacing:-0.11px;">17:04</div>
<!-- /SECTION-TASKBAR -->
</div>
</body>
</html>
